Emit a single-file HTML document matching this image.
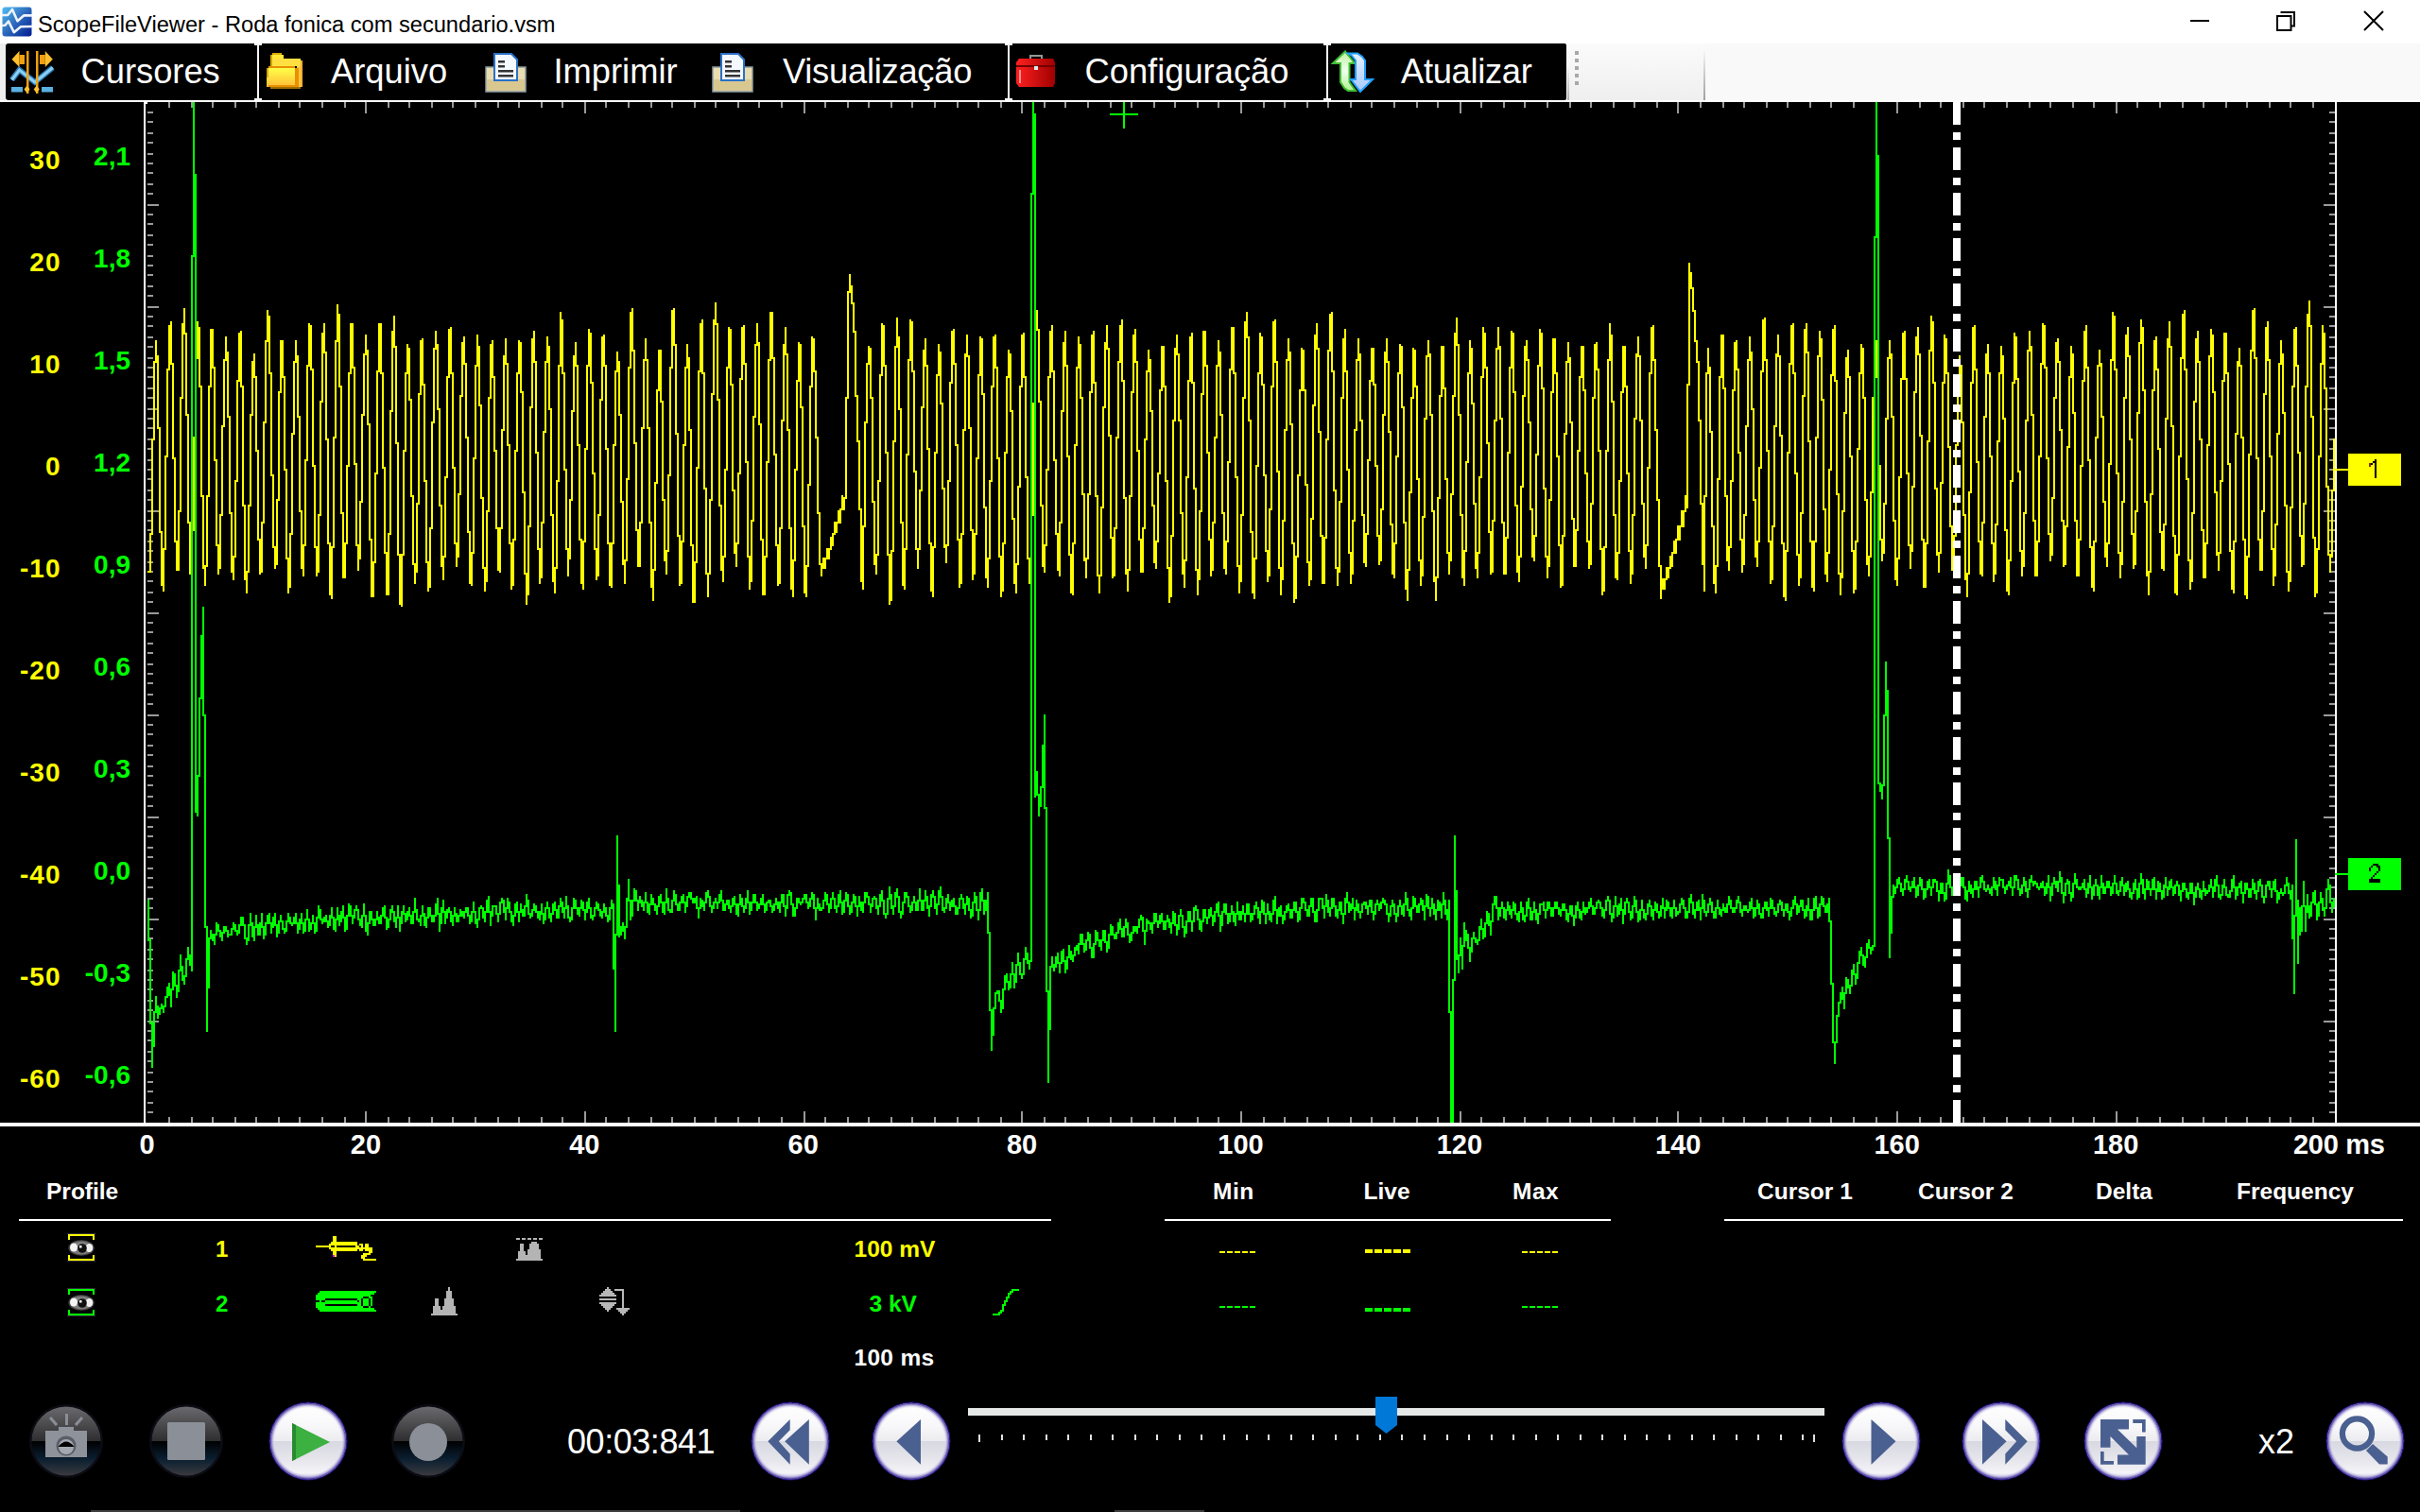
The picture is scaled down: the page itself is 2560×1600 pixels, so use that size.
<!DOCTYPE html>
<html><head><meta charset="utf-8"><title>ScopeFileViewer</title>
<style>
html,body{margin:0;padding:0;}
body{width:2560px;height:1600px;overflow:hidden;position:relative;background:#000;font-family:"Liberation Sans", sans-serif;}
.t{position:absolute;white-space:pre;line-height:1;}
.r{position:absolute;}
svg{position:absolute;overflow:visible;}
</style></head><body>

<div class="r" style="left:0px;top:0px;width:2560px;height:46px;background:#ffffff;"></div>
<svg style="left:2px;top:7px" width="32" height="32" viewBox="0 0 32 32">
<defs><linearGradient id="ig" x1="0" y1="0" x2="1" y2="1"><stop offset="0" stop-color="#50c0f4"/><stop offset="0.45" stop-color="#3070c0"/><stop offset="1" stop-color="#001890"/></linearGradient></defs>
<rect x="0.5" y="0.5" width="31" height="31" rx="3" fill="url(#ig)"/>
<polyline points="0,9 6.2,9 11,3 16.5,15.3 23.4,9.2 32,9.4" fill="none" stroke="#eef2fa" stroke-width="2.6" stroke-linejoin="round"/>
<polyline points="0,20 3.3,19.8 7,15.5 12.8,27.2 20,21.3 32,21" fill="none" stroke="#eef2fa" stroke-width="2.6" stroke-linejoin="round"/>
</svg>
<div class="t" style="left:40px;top:14.98px;font-size:23.65px;color:#000;font-weight:normal;">ScopeFileViewer - Roda fonica com secundario.vsm</div>
<div class="r" style="left:2317px;top:21px;width:20px;height:2px;background:#000;"></div>
<svg style="left:2400px;top:8px" width="36" height="30" viewBox="0 0 36 30">
<path d="M12.5 5 H27 V19.5 H24" fill="none" stroke="#000" stroke-width="2"/>
<rect x="9" y="9" width="14.5" height="15" fill="none" stroke="#000" stroke-width="2"/>
</svg>
<svg style="left:2496px;top:8px" width="30" height="30" viewBox="0 0 30 30">
<path d="M5 4 L25 24 M25 4 L5 24" fill="none" stroke="#000" stroke-width="2"/>
</svg>
<div class="r" style="left:0px;top:46px;width:2560px;height:60px;background:#f9f9f9;"></div>
<div class="r" style="left:0px;top:46px;width:6px;height:60px;background:#eeeeee;"></div>
<div class="r" style="left:1658px;top:46px;width:146px;height:60px;background:linear-gradient(#fbfbfb,#efefef)"></div>
<div class="r" style="left:1802px;top:52px;width:2px;height:54px;background:linear-gradient(rgba(160,160,160,0),#a0a0a0)"></div>
<div class="r" style="left:1658px;top:70px;width:2px;height:36px;background:linear-gradient(rgba(160,160,160,0),#b0b0b0)"></div>
<div class="r" style="left:1666px;top:54px;width:4px;height:4px;background:#a8a8a8;"></div>
<div class="r" style="left:1666px;top:62px;width:4px;height:4px;background:#a8a8a8;"></div>
<div class="r" style="left:1666px;top:70px;width:4px;height:4px;background:#a8a8a8;"></div>
<div class="r" style="left:1666px;top:78px;width:4px;height:4px;background:#a8a8a8;"></div>
<div class="r" style="left:1666px;top:86px;width:4px;height:4px;background:#a8a8a8;"></div>
<div class="r" style="left:6px;top:46px;width:1651px;height:60px;background:#000;border-radius:3px 2px 2px 3px"></div>
<div class="r" style="left:272px;top:46px;width:2px;height:60px;background:#f4f4f4;"></div>
<div class="r" style="left:269px;top:46px;width:8px;height:2px;background:#f4f4f4;"></div>
<div class="r" style="left:269px;top:104px;width:8px;height:2px;background:#f4f4f4;"></div>
<div class="r" style="left:1066px;top:46px;width:2px;height:60px;background:#f4f4f4;"></div>
<div class="r" style="left:1063px;top:46px;width:8px;height:2px;background:#f4f4f4;"></div>
<div class="r" style="left:1063px;top:104px;width:8px;height:2px;background:#f4f4f4;"></div>
<div class="r" style="left:1403px;top:46px;width:2px;height:60px;background:#f4f4f4;"></div>
<div class="r" style="left:1400px;top:46px;width:8px;height:2px;background:#f4f4f4;"></div>
<div class="r" style="left:1400px;top:104px;width:8px;height:2px;background:#f4f4f4;"></div>
<div class="t" style="left:85.5px;top:57.87px;font-size:36.3px;color:#fff;font-weight:normal;">Cursores</div>
<div class="t" style="left:350px;top:57.87px;font-size:36.3px;color:#fff;font-weight:normal;">Arquivo</div>
<div class="t" style="left:585.5px;top:57.87px;font-size:36.3px;color:#fff;font-weight:normal;">Imprimir</div>
<div class="t" style="left:828px;top:57.87px;font-size:36.3px;color:#fff;font-weight:normal;letter-spacing:-0.25px">Visualização</div>
<div class="t" style="left:1147.5px;top:57.87px;font-size:36.3px;color:#fff;font-weight:normal;">Configuração</div>
<div class="t" style="left:1482px;top:57.87px;font-size:36.3px;color:#fff;font-weight:normal;letter-spacing:-0.3px">Atualizar</div>
<svg style="left:12px;top:52px" width="46" height="50" viewBox="0 0 46 50">
<path d="M0.5 32.5 L8.5 22 L25 35 L43.8 19.5" fill="none" stroke="#2a7ab8" stroke-width="6"/>
<path d="M0.5 32.5 L8.5 22 L25 35 L43.8 19.5" fill="none" stroke="#8ccff0" stroke-width="3"/>
<rect x="0" y="40" width="12" height="5.5" fill="#5ab0e0"/><rect x="32" y="40" width="12" height="5.5" fill="#5ab0e0"/>
<rect x="16" y="2" width="2.5" height="45" fill="#f0a010"/><rect x="26" y="2" width="2.5" height="45" fill="#f0a010"/>
<path d="M0.5 10.8 L8.5 2 V19 Z" fill="#ffc030"/><rect x="8.5" y="6" width="5.5" height="10" fill="#f0a010"/>
<path d="M43.8 10.8 L35.8 2 V19 Z" fill="#ffc030"/><rect x="30" y="6" width="5.8" height="10" fill="#f0a010"/>
<path d="M16.5 38.5 L19.5 42.5 L16.5 46.5 L13.5 42.5 Z" fill="#ffc030"/><path d="M26.7 38.5 L29.7 42.5 L26.7 46.5 L23.7 42.5 Z" fill="#ffc030"/>
</svg>
<svg style="left:282px;top:56px" width="40" height="40" viewBox="0 0 40 40" shape-rendering="crispEdges">
<defs><linearGradient id="fg" x1="0" y1="0" x2="0" y2="1"><stop offset="0" stop-color="#ffff48"/><stop offset="1" stop-color="#ffbc38"/></linearGradient></defs>
<rect x="6" y="0" width="10" height="2" fill="#d8b000"/><rect x="4" y="2" width="14" height="6" fill="#ffe838"/>
<rect x="4" y="6" width="32" height="8" fill="#ffe040"/><rect x="4" y="2" width="2" height="12" fill="#d0a800"/>
<rect x="36" y="8" width="2" height="28" fill="#ffb030"/><rect x="32" y="14" width="4" height="22" fill="#ffc840"/>
<rect x="2" y="14" width="28" height="2" fill="#e89000"/>
<rect x="0" y="16" width="32" height="20" fill="url(#fg)"/><rect x="0" y="16" width="2" height="10" fill="#d8a800"/>
<rect x="30" y="16" width="4" height="20" fill="#e89000"/>
<rect x="2" y="34" width="32" height="2" fill="#e89000"/><rect x="4" y="36" width="32" height="2" fill="#a07000"/>
</svg>
<svg style="left:513px;top:56px" width="44" height="42" viewBox="0 0 44 42">
<path d="M1 15 H43 V41 H1 Z" fill="#e8dcb0" stroke="#8a9aa0" stroke-width="1.5"/>
<path d="M2 28 H42 V40 H2 Z" fill="#d8c890"/>
<path d="M10 1 H28 L34 7 V29 H10 Z" fill="#f4f8ff" stroke="#2a70c8" stroke-width="2"/>
<rect x="14" y="8" width="7" height="2.5" fill="#333"/><rect x="14" y="13" width="7" height="2.5" fill="#333"/>
<rect x="14" y="18" width="16" height="2.5" fill="#333"/><rect x="14" y="23" width="16" height="2.5" fill="#333"/>
</svg>
<svg style="left:753px;top:56px" width="44" height="42" viewBox="0 0 44 42">
<path d="M1 15 H43 V41 H1 Z" fill="#e8dcb0" stroke="#8a9aa0" stroke-width="1.5"/>
<path d="M2 28 H42 V40 H2 Z" fill="#d8c890"/>
<path d="M10 1 H28 L34 7 V29 H10 Z" fill="#f4f8ff" stroke="#2a70c8" stroke-width="2"/>
<rect x="14" y="8" width="7" height="2.5" fill="#333"/><rect x="14" y="13" width="7" height="2.5" fill="#333"/>
<rect x="14" y="18" width="16" height="2.5" fill="#333"/><rect x="14" y="23" width="16" height="2.5" fill="#333"/>
</svg>
<svg style="left:1074px;top:58px" width="44" height="36" viewBox="0 0 44 36">
<path d="M16 5 V1 H28 V5" fill="none" stroke="#909898" stroke-width="2"/>
<defs><linearGradient id="tg" x1="0" y1="0" x2="1" y2="0"><stop offset="0" stop-color="#ff2020"/><stop offset="1" stop-color="#a00000"/></linearGradient></defs>
<path d="M4 4 H40 L42 8 V30 L40 34 H4 L1 30 V8 Z" fill="url(#tg)"/>
<rect x="1" y="11" width="41" height="2" fill="#700000"/>
<rect x="4" y="16" width="2" height="14" fill="#ff9090"/>
<rect x="20" y="12" width="4" height="4" fill="#e0e8e8"/>
</svg>
<svg style="left:1410px;top:53px" width="46" height="46" viewBox="0 0 46 46">
<defs><linearGradient id="rg1" x1="0" y1="0" x2="0" y2="1"><stop offset="0" stop-color="#c0f0a0"/><stop offset="0.5" stop-color="#f0fff0"/><stop offset="1" stop-color="#b0f090"/></linearGradient>
<linearGradient id="rg2" x1="0" y1="0" x2="0" y2="1"><stop offset="0" stop-color="#e8f0ff"/><stop offset="1" stop-color="#a8c8ff"/></linearGradient></defs>
<path d="M13 1.5 L0 14 H8 V34 L12 40 L16 43 H24 L17.5 34 V14 H23 Z" fill="url(#rg1)" stroke="#40c030" stroke-width="2"/>
<path d="M16 3.5 H26 L31 7 L34 11 V31 H42 L29 44 L19 31 H24 V11 L20 6 Z" fill="url(#rg2)" stroke="#20a0ff" stroke-width="2"/>
</svg>
<div class="r" style="left:0px;top:106px;width:2560px;height:2px;background:#ffffff;"></div>
<div class="r" style="left:152px;top:106px;width:2px;height:1082px;background:#ffffff;"></div>
<div class="r" style="left:154px;top:108px;width:2px;height:2px;background:#ffffff;"></div>
<div class="r" style="left:0px;top:1188px;width:2560px;height:4px;background:#ffffff;"></div>
<div class="r" style="left:2470px;top:108px;width:2px;height:1080px;background:#ffffff;"></div>
<div class="r" style="left:178px;top:108px;width:2px;height:6px;background:#9a9a9a;"></div>
<div class="r" style="left:178px;top:1182px;width:2px;height:6px;background:#9a9a9a;"></div>
<div class="r" style="left:202px;top:108px;width:2px;height:6px;background:#9a9a9a;"></div>
<div class="r" style="left:202px;top:1182px;width:2px;height:6px;background:#9a9a9a;"></div>
<div class="r" style="left:224px;top:108px;width:2px;height:6px;background:#9a9a9a;"></div>
<div class="r" style="left:224px;top:1182px;width:2px;height:6px;background:#9a9a9a;"></div>
<div class="r" style="left:248px;top:108px;width:2px;height:6px;background:#9a9a9a;"></div>
<div class="r" style="left:248px;top:1182px;width:2px;height:6px;background:#9a9a9a;"></div>
<div class="r" style="left:270px;top:108px;width:2px;height:6px;background:#9a9a9a;"></div>
<div class="r" style="left:270px;top:1182px;width:2px;height:6px;background:#9a9a9a;"></div>
<div class="r" style="left:294px;top:108px;width:2px;height:6px;background:#9a9a9a;"></div>
<div class="r" style="left:294px;top:1182px;width:2px;height:6px;background:#9a9a9a;"></div>
<div class="r" style="left:316px;top:108px;width:2px;height:6px;background:#9a9a9a;"></div>
<div class="r" style="left:316px;top:1182px;width:2px;height:6px;background:#9a9a9a;"></div>
<div class="r" style="left:340px;top:108px;width:2px;height:6px;background:#9a9a9a;"></div>
<div class="r" style="left:340px;top:1182px;width:2px;height:6px;background:#9a9a9a;"></div>
<div class="r" style="left:364px;top:108px;width:2px;height:6px;background:#9a9a9a;"></div>
<div class="r" style="left:364px;top:1182px;width:2px;height:6px;background:#9a9a9a;"></div>
<div class="r" style="left:386px;top:108px;width:2px;height:12px;background:#9a9a9a;"></div>
<div class="r" style="left:386px;top:1176px;width:2px;height:12px;background:#9a9a9a;"></div>
<div class="r" style="left:410px;top:108px;width:2px;height:6px;background:#9a9a9a;"></div>
<div class="r" style="left:410px;top:1182px;width:2px;height:6px;background:#9a9a9a;"></div>
<div class="r" style="left:432px;top:108px;width:2px;height:6px;background:#9a9a9a;"></div>
<div class="r" style="left:432px;top:1182px;width:2px;height:6px;background:#9a9a9a;"></div>
<div class="r" style="left:456px;top:108px;width:2px;height:6px;background:#9a9a9a;"></div>
<div class="r" style="left:456px;top:1182px;width:2px;height:6px;background:#9a9a9a;"></div>
<div class="r" style="left:478px;top:108px;width:2px;height:6px;background:#9a9a9a;"></div>
<div class="r" style="left:478px;top:1182px;width:2px;height:6px;background:#9a9a9a;"></div>
<div class="r" style="left:502px;top:108px;width:2px;height:6px;background:#9a9a9a;"></div>
<div class="r" style="left:502px;top:1182px;width:2px;height:6px;background:#9a9a9a;"></div>
<div class="r" style="left:526px;top:108px;width:2px;height:6px;background:#9a9a9a;"></div>
<div class="r" style="left:526px;top:1182px;width:2px;height:6px;background:#9a9a9a;"></div>
<div class="r" style="left:548px;top:108px;width:2px;height:6px;background:#9a9a9a;"></div>
<div class="r" style="left:548px;top:1182px;width:2px;height:6px;background:#9a9a9a;"></div>
<div class="r" style="left:572px;top:108px;width:2px;height:6px;background:#9a9a9a;"></div>
<div class="r" style="left:572px;top:1182px;width:2px;height:6px;background:#9a9a9a;"></div>
<div class="r" style="left:594px;top:108px;width:2px;height:6px;background:#9a9a9a;"></div>
<div class="r" style="left:594px;top:1182px;width:2px;height:6px;background:#9a9a9a;"></div>
<div class="r" style="left:618px;top:108px;width:2px;height:12px;background:#9a9a9a;"></div>
<div class="r" style="left:618px;top:1176px;width:2px;height:12px;background:#9a9a9a;"></div>
<div class="r" style="left:640px;top:108px;width:2px;height:6px;background:#9a9a9a;"></div>
<div class="r" style="left:640px;top:1182px;width:2px;height:6px;background:#9a9a9a;"></div>
<div class="r" style="left:664px;top:108px;width:2px;height:6px;background:#9a9a9a;"></div>
<div class="r" style="left:664px;top:1182px;width:2px;height:6px;background:#9a9a9a;"></div>
<div class="r" style="left:688px;top:108px;width:2px;height:6px;background:#9a9a9a;"></div>
<div class="r" style="left:688px;top:1182px;width:2px;height:6px;background:#9a9a9a;"></div>
<div class="r" style="left:710px;top:108px;width:2px;height:6px;background:#9a9a9a;"></div>
<div class="r" style="left:710px;top:1182px;width:2px;height:6px;background:#9a9a9a;"></div>
<div class="r" style="left:734px;top:108px;width:2px;height:6px;background:#9a9a9a;"></div>
<div class="r" style="left:734px;top:1182px;width:2px;height:6px;background:#9a9a9a;"></div>
<div class="r" style="left:756px;top:108px;width:2px;height:6px;background:#9a9a9a;"></div>
<div class="r" style="left:756px;top:1182px;width:2px;height:6px;background:#9a9a9a;"></div>
<div class="r" style="left:780px;top:108px;width:2px;height:6px;background:#9a9a9a;"></div>
<div class="r" style="left:780px;top:1182px;width:2px;height:6px;background:#9a9a9a;"></div>
<div class="r" style="left:802px;top:108px;width:2px;height:6px;background:#9a9a9a;"></div>
<div class="r" style="left:802px;top:1182px;width:2px;height:6px;background:#9a9a9a;"></div>
<div class="r" style="left:826px;top:108px;width:2px;height:6px;background:#9a9a9a;"></div>
<div class="r" style="left:826px;top:1182px;width:2px;height:6px;background:#9a9a9a;"></div>
<div class="r" style="left:850px;top:108px;width:2px;height:12px;background:#9a9a9a;"></div>
<div class="r" style="left:850px;top:1176px;width:2px;height:12px;background:#9a9a9a;"></div>
<div class="r" style="left:872px;top:108px;width:2px;height:6px;background:#9a9a9a;"></div>
<div class="r" style="left:872px;top:1182px;width:2px;height:6px;background:#9a9a9a;"></div>
<div class="r" style="left:896px;top:108px;width:2px;height:6px;background:#9a9a9a;"></div>
<div class="r" style="left:896px;top:1182px;width:2px;height:6px;background:#9a9a9a;"></div>
<div class="r" style="left:918px;top:108px;width:2px;height:6px;background:#9a9a9a;"></div>
<div class="r" style="left:918px;top:1182px;width:2px;height:6px;background:#9a9a9a;"></div>
<div class="r" style="left:942px;top:108px;width:2px;height:6px;background:#9a9a9a;"></div>
<div class="r" style="left:942px;top:1182px;width:2px;height:6px;background:#9a9a9a;"></div>
<div class="r" style="left:964px;top:108px;width:2px;height:6px;background:#9a9a9a;"></div>
<div class="r" style="left:964px;top:1182px;width:2px;height:6px;background:#9a9a9a;"></div>
<div class="r" style="left:988px;top:108px;width:2px;height:6px;background:#9a9a9a;"></div>
<div class="r" style="left:988px;top:1182px;width:2px;height:6px;background:#9a9a9a;"></div>
<div class="r" style="left:1012px;top:108px;width:2px;height:6px;background:#9a9a9a;"></div>
<div class="r" style="left:1012px;top:1182px;width:2px;height:6px;background:#9a9a9a;"></div>
<div class="r" style="left:1034px;top:108px;width:2px;height:6px;background:#9a9a9a;"></div>
<div class="r" style="left:1034px;top:1182px;width:2px;height:6px;background:#9a9a9a;"></div>
<div class="r" style="left:1058px;top:108px;width:2px;height:6px;background:#9a9a9a;"></div>
<div class="r" style="left:1058px;top:1182px;width:2px;height:6px;background:#9a9a9a;"></div>
<div class="r" style="left:1080px;top:108px;width:2px;height:12px;background:#9a9a9a;"></div>
<div class="r" style="left:1080px;top:1176px;width:2px;height:12px;background:#9a9a9a;"></div>
<div class="r" style="left:1104px;top:108px;width:2px;height:6px;background:#9a9a9a;"></div>
<div class="r" style="left:1104px;top:1182px;width:2px;height:6px;background:#9a9a9a;"></div>
<div class="r" style="left:1126px;top:108px;width:2px;height:6px;background:#9a9a9a;"></div>
<div class="r" style="left:1126px;top:1182px;width:2px;height:6px;background:#9a9a9a;"></div>
<div class="r" style="left:1150px;top:108px;width:2px;height:6px;background:#9a9a9a;"></div>
<div class="r" style="left:1150px;top:1182px;width:2px;height:6px;background:#9a9a9a;"></div>
<div class="r" style="left:1174px;top:108px;width:2px;height:6px;background:#9a9a9a;"></div>
<div class="r" style="left:1174px;top:1182px;width:2px;height:6px;background:#9a9a9a;"></div>
<div class="r" style="left:1196px;top:108px;width:2px;height:6px;background:#9a9a9a;"></div>
<div class="r" style="left:1196px;top:1182px;width:2px;height:6px;background:#9a9a9a;"></div>
<div class="r" style="left:1220px;top:108px;width:2px;height:6px;background:#9a9a9a;"></div>
<div class="r" style="left:1220px;top:1182px;width:2px;height:6px;background:#9a9a9a;"></div>
<div class="r" style="left:1242px;top:108px;width:2px;height:6px;background:#9a9a9a;"></div>
<div class="r" style="left:1242px;top:1182px;width:2px;height:6px;background:#9a9a9a;"></div>
<div class="r" style="left:1266px;top:108px;width:2px;height:6px;background:#9a9a9a;"></div>
<div class="r" style="left:1266px;top:1182px;width:2px;height:6px;background:#9a9a9a;"></div>
<div class="r" style="left:1288px;top:108px;width:2px;height:6px;background:#9a9a9a;"></div>
<div class="r" style="left:1288px;top:1182px;width:2px;height:6px;background:#9a9a9a;"></div>
<div class="r" style="left:1312px;top:108px;width:2px;height:12px;background:#9a9a9a;"></div>
<div class="r" style="left:1312px;top:1176px;width:2px;height:12px;background:#9a9a9a;"></div>
<div class="r" style="left:1336px;top:108px;width:2px;height:6px;background:#9a9a9a;"></div>
<div class="r" style="left:1336px;top:1182px;width:2px;height:6px;background:#9a9a9a;"></div>
<div class="r" style="left:1358px;top:108px;width:2px;height:6px;background:#9a9a9a;"></div>
<div class="r" style="left:1358px;top:1182px;width:2px;height:6px;background:#9a9a9a;"></div>
<div class="r" style="left:1382px;top:108px;width:2px;height:6px;background:#9a9a9a;"></div>
<div class="r" style="left:1382px;top:1182px;width:2px;height:6px;background:#9a9a9a;"></div>
<div class="r" style="left:1404px;top:108px;width:2px;height:6px;background:#9a9a9a;"></div>
<div class="r" style="left:1404px;top:1182px;width:2px;height:6px;background:#9a9a9a;"></div>
<div class="r" style="left:1428px;top:108px;width:2px;height:6px;background:#9a9a9a;"></div>
<div class="r" style="left:1428px;top:1182px;width:2px;height:6px;background:#9a9a9a;"></div>
<div class="r" style="left:1450px;top:108px;width:2px;height:6px;background:#9a9a9a;"></div>
<div class="r" style="left:1450px;top:1182px;width:2px;height:6px;background:#9a9a9a;"></div>
<div class="r" style="left:1474px;top:108px;width:2px;height:6px;background:#9a9a9a;"></div>
<div class="r" style="left:1474px;top:1182px;width:2px;height:6px;background:#9a9a9a;"></div>
<div class="r" style="left:1498px;top:108px;width:2px;height:6px;background:#9a9a9a;"></div>
<div class="r" style="left:1498px;top:1182px;width:2px;height:6px;background:#9a9a9a;"></div>
<div class="r" style="left:1520px;top:108px;width:2px;height:6px;background:#9a9a9a;"></div>
<div class="r" style="left:1520px;top:1182px;width:2px;height:6px;background:#9a9a9a;"></div>
<div class="r" style="left:1544px;top:108px;width:2px;height:12px;background:#9a9a9a;"></div>
<div class="r" style="left:1544px;top:1176px;width:2px;height:12px;background:#9a9a9a;"></div>
<div class="r" style="left:1566px;top:108px;width:2px;height:6px;background:#9a9a9a;"></div>
<div class="r" style="left:1566px;top:1182px;width:2px;height:6px;background:#9a9a9a;"></div>
<div class="r" style="left:1590px;top:108px;width:2px;height:6px;background:#9a9a9a;"></div>
<div class="r" style="left:1590px;top:1182px;width:2px;height:6px;background:#9a9a9a;"></div>
<div class="r" style="left:1612px;top:108px;width:2px;height:6px;background:#9a9a9a;"></div>
<div class="r" style="left:1612px;top:1182px;width:2px;height:6px;background:#9a9a9a;"></div>
<div class="r" style="left:1636px;top:108px;width:2px;height:6px;background:#9a9a9a;"></div>
<div class="r" style="left:1636px;top:1182px;width:2px;height:6px;background:#9a9a9a;"></div>
<div class="r" style="left:1660px;top:108px;width:2px;height:6px;background:#9a9a9a;"></div>
<div class="r" style="left:1660px;top:1182px;width:2px;height:6px;background:#9a9a9a;"></div>
<div class="r" style="left:1682px;top:108px;width:2px;height:6px;background:#9a9a9a;"></div>
<div class="r" style="left:1682px;top:1182px;width:2px;height:6px;background:#9a9a9a;"></div>
<div class="r" style="left:1706px;top:108px;width:2px;height:6px;background:#9a9a9a;"></div>
<div class="r" style="left:1706px;top:1182px;width:2px;height:6px;background:#9a9a9a;"></div>
<div class="r" style="left:1728px;top:108px;width:2px;height:6px;background:#9a9a9a;"></div>
<div class="r" style="left:1728px;top:1182px;width:2px;height:6px;background:#9a9a9a;"></div>
<div class="r" style="left:1752px;top:108px;width:2px;height:6px;background:#9a9a9a;"></div>
<div class="r" style="left:1752px;top:1182px;width:2px;height:6px;background:#9a9a9a;"></div>
<div class="r" style="left:1774px;top:108px;width:2px;height:12px;background:#9a9a9a;"></div>
<div class="r" style="left:1774px;top:1176px;width:2px;height:12px;background:#9a9a9a;"></div>
<div class="r" style="left:1798px;top:108px;width:2px;height:6px;background:#9a9a9a;"></div>
<div class="r" style="left:1798px;top:1182px;width:2px;height:6px;background:#9a9a9a;"></div>
<div class="r" style="left:1822px;top:108px;width:2px;height:6px;background:#9a9a9a;"></div>
<div class="r" style="left:1822px;top:1182px;width:2px;height:6px;background:#9a9a9a;"></div>
<div class="r" style="left:1844px;top:108px;width:2px;height:6px;background:#9a9a9a;"></div>
<div class="r" style="left:1844px;top:1182px;width:2px;height:6px;background:#9a9a9a;"></div>
<div class="r" style="left:1868px;top:108px;width:2px;height:6px;background:#9a9a9a;"></div>
<div class="r" style="left:1868px;top:1182px;width:2px;height:6px;background:#9a9a9a;"></div>
<div class="r" style="left:1890px;top:108px;width:2px;height:6px;background:#9a9a9a;"></div>
<div class="r" style="left:1890px;top:1182px;width:2px;height:6px;background:#9a9a9a;"></div>
<div class="r" style="left:1914px;top:108px;width:2px;height:6px;background:#9a9a9a;"></div>
<div class="r" style="left:1914px;top:1182px;width:2px;height:6px;background:#9a9a9a;"></div>
<div class="r" style="left:1936px;top:108px;width:2px;height:6px;background:#9a9a9a;"></div>
<div class="r" style="left:1936px;top:1182px;width:2px;height:6px;background:#9a9a9a;"></div>
<div class="r" style="left:1960px;top:108px;width:2px;height:6px;background:#9a9a9a;"></div>
<div class="r" style="left:1960px;top:1182px;width:2px;height:6px;background:#9a9a9a;"></div>
<div class="r" style="left:1984px;top:108px;width:2px;height:6px;background:#9a9a9a;"></div>
<div class="r" style="left:1984px;top:1182px;width:2px;height:6px;background:#9a9a9a;"></div>
<div class="r" style="left:2006px;top:108px;width:2px;height:12px;background:#9a9a9a;"></div>
<div class="r" style="left:2006px;top:1176px;width:2px;height:12px;background:#9a9a9a;"></div>
<div class="r" style="left:2030px;top:108px;width:2px;height:6px;background:#9a9a9a;"></div>
<div class="r" style="left:2030px;top:1182px;width:2px;height:6px;background:#9a9a9a;"></div>
<div class="r" style="left:2052px;top:108px;width:2px;height:6px;background:#9a9a9a;"></div>
<div class="r" style="left:2052px;top:1182px;width:2px;height:6px;background:#9a9a9a;"></div>
<div class="r" style="left:2076px;top:108px;width:2px;height:6px;background:#9a9a9a;"></div>
<div class="r" style="left:2076px;top:1182px;width:2px;height:6px;background:#9a9a9a;"></div>
<div class="r" style="left:2098px;top:108px;width:2px;height:6px;background:#9a9a9a;"></div>
<div class="r" style="left:2098px;top:1182px;width:2px;height:6px;background:#9a9a9a;"></div>
<div class="r" style="left:2122px;top:108px;width:2px;height:6px;background:#9a9a9a;"></div>
<div class="r" style="left:2122px;top:1182px;width:2px;height:6px;background:#9a9a9a;"></div>
<div class="r" style="left:2146px;top:108px;width:2px;height:6px;background:#9a9a9a;"></div>
<div class="r" style="left:2146px;top:1182px;width:2px;height:6px;background:#9a9a9a;"></div>
<div class="r" style="left:2168px;top:108px;width:2px;height:6px;background:#9a9a9a;"></div>
<div class="r" style="left:2168px;top:1182px;width:2px;height:6px;background:#9a9a9a;"></div>
<div class="r" style="left:2192px;top:108px;width:2px;height:6px;background:#9a9a9a;"></div>
<div class="r" style="left:2192px;top:1182px;width:2px;height:6px;background:#9a9a9a;"></div>
<div class="r" style="left:2214px;top:108px;width:2px;height:6px;background:#9a9a9a;"></div>
<div class="r" style="left:2214px;top:1182px;width:2px;height:6px;background:#9a9a9a;"></div>
<div class="r" style="left:2238px;top:108px;width:2px;height:12px;background:#9a9a9a;"></div>
<div class="r" style="left:2238px;top:1176px;width:2px;height:12px;background:#9a9a9a;"></div>
<div class="r" style="left:2260px;top:108px;width:2px;height:6px;background:#9a9a9a;"></div>
<div class="r" style="left:2260px;top:1182px;width:2px;height:6px;background:#9a9a9a;"></div>
<div class="r" style="left:2284px;top:108px;width:2px;height:6px;background:#9a9a9a;"></div>
<div class="r" style="left:2284px;top:1182px;width:2px;height:6px;background:#9a9a9a;"></div>
<div class="r" style="left:2308px;top:108px;width:2px;height:6px;background:#9a9a9a;"></div>
<div class="r" style="left:2308px;top:1182px;width:2px;height:6px;background:#9a9a9a;"></div>
<div class="r" style="left:2330px;top:108px;width:2px;height:6px;background:#9a9a9a;"></div>
<div class="r" style="left:2330px;top:1182px;width:2px;height:6px;background:#9a9a9a;"></div>
<div class="r" style="left:2354px;top:108px;width:2px;height:6px;background:#9a9a9a;"></div>
<div class="r" style="left:2354px;top:1182px;width:2px;height:6px;background:#9a9a9a;"></div>
<div class="r" style="left:2376px;top:108px;width:2px;height:6px;background:#9a9a9a;"></div>
<div class="r" style="left:2376px;top:1182px;width:2px;height:6px;background:#9a9a9a;"></div>
<div class="r" style="left:2400px;top:108px;width:2px;height:6px;background:#9a9a9a;"></div>
<div class="r" style="left:2400px;top:1182px;width:2px;height:6px;background:#9a9a9a;"></div>
<div class="r" style="left:2422px;top:108px;width:2px;height:6px;background:#9a9a9a;"></div>
<div class="r" style="left:2422px;top:1182px;width:2px;height:6px;background:#9a9a9a;"></div>
<div class="r" style="left:2446px;top:108px;width:2px;height:6px;background:#9a9a9a;"></div>
<div class="r" style="left:2446px;top:1182px;width:2px;height:6px;background:#9a9a9a;"></div>
<div class="r" style="left:156px;top:118px;width:6px;height:2px;background:#9a9a9a;"></div>
<div class="r" style="left:2464px;top:118px;width:6px;height:2px;background:#9a9a9a;"></div>
<div class="r" style="left:156px;top:128px;width:6px;height:2px;background:#9a9a9a;"></div>
<div class="r" style="left:2464px;top:128px;width:6px;height:2px;background:#9a9a9a;"></div>
<div class="r" style="left:156px;top:140px;width:6px;height:2px;background:#9a9a9a;"></div>
<div class="r" style="left:2464px;top:140px;width:6px;height:2px;background:#9a9a9a;"></div>
<div class="r" style="left:156px;top:150px;width:6px;height:2px;background:#9a9a9a;"></div>
<div class="r" style="left:2464px;top:150px;width:6px;height:2px;background:#9a9a9a;"></div>
<div class="r" style="left:156px;top:162px;width:6px;height:2px;background:#9a9a9a;"></div>
<div class="r" style="left:2464px;top:162px;width:6px;height:2px;background:#9a9a9a;"></div>
<div class="r" style="left:156px;top:172px;width:6px;height:2px;background:#9a9a9a;"></div>
<div class="r" style="left:2464px;top:172px;width:6px;height:2px;background:#9a9a9a;"></div>
<div class="r" style="left:156px;top:182px;width:6px;height:2px;background:#9a9a9a;"></div>
<div class="r" style="left:2464px;top:182px;width:6px;height:2px;background:#9a9a9a;"></div>
<div class="r" style="left:156px;top:194px;width:6px;height:2px;background:#9a9a9a;"></div>
<div class="r" style="left:2464px;top:194px;width:6px;height:2px;background:#9a9a9a;"></div>
<div class="r" style="left:156px;top:204px;width:6px;height:2px;background:#9a9a9a;"></div>
<div class="r" style="left:2464px;top:204px;width:6px;height:2px;background:#9a9a9a;"></div>
<div class="r" style="left:156px;top:216px;width:12px;height:2px;background:#9a9a9a;"></div>
<div class="r" style="left:2458px;top:216px;width:12px;height:2px;background:#9a9a9a;"></div>
<div class="r" style="left:156px;top:226px;width:6px;height:2px;background:#9a9a9a;"></div>
<div class="r" style="left:2464px;top:226px;width:6px;height:2px;background:#9a9a9a;"></div>
<div class="r" style="left:156px;top:236px;width:6px;height:2px;background:#9a9a9a;"></div>
<div class="r" style="left:2464px;top:236px;width:6px;height:2px;background:#9a9a9a;"></div>
<div class="r" style="left:156px;top:248px;width:6px;height:2px;background:#9a9a9a;"></div>
<div class="r" style="left:2464px;top:248px;width:6px;height:2px;background:#9a9a9a;"></div>
<div class="r" style="left:156px;top:258px;width:6px;height:2px;background:#9a9a9a;"></div>
<div class="r" style="left:2464px;top:258px;width:6px;height:2px;background:#9a9a9a;"></div>
<div class="r" style="left:156px;top:270px;width:6px;height:2px;background:#9a9a9a;"></div>
<div class="r" style="left:2464px;top:270px;width:6px;height:2px;background:#9a9a9a;"></div>
<div class="r" style="left:156px;top:280px;width:6px;height:2px;background:#9a9a9a;"></div>
<div class="r" style="left:2464px;top:280px;width:6px;height:2px;background:#9a9a9a;"></div>
<div class="r" style="left:156px;top:290px;width:6px;height:2px;background:#9a9a9a;"></div>
<div class="r" style="left:2464px;top:290px;width:6px;height:2px;background:#9a9a9a;"></div>
<div class="r" style="left:156px;top:302px;width:6px;height:2px;background:#9a9a9a;"></div>
<div class="r" style="left:2464px;top:302px;width:6px;height:2px;background:#9a9a9a;"></div>
<div class="r" style="left:156px;top:312px;width:6px;height:2px;background:#9a9a9a;"></div>
<div class="r" style="left:2464px;top:312px;width:6px;height:2px;background:#9a9a9a;"></div>
<div class="r" style="left:156px;top:324px;width:12px;height:2px;background:#9a9a9a;"></div>
<div class="r" style="left:2458px;top:324px;width:12px;height:2px;background:#9a9a9a;"></div>
<div class="r" style="left:156px;top:334px;width:6px;height:2px;background:#9a9a9a;"></div>
<div class="r" style="left:2464px;top:334px;width:6px;height:2px;background:#9a9a9a;"></div>
<div class="r" style="left:156px;top:344px;width:6px;height:2px;background:#9a9a9a;"></div>
<div class="r" style="left:2464px;top:344px;width:6px;height:2px;background:#9a9a9a;"></div>
<div class="r" style="left:156px;top:356px;width:6px;height:2px;background:#9a9a9a;"></div>
<div class="r" style="left:2464px;top:356px;width:6px;height:2px;background:#9a9a9a;"></div>
<div class="r" style="left:156px;top:366px;width:6px;height:2px;background:#9a9a9a;"></div>
<div class="r" style="left:2464px;top:366px;width:6px;height:2px;background:#9a9a9a;"></div>
<div class="r" style="left:156px;top:378px;width:6px;height:2px;background:#9a9a9a;"></div>
<div class="r" style="left:2464px;top:378px;width:6px;height:2px;background:#9a9a9a;"></div>
<div class="r" style="left:156px;top:388px;width:6px;height:2px;background:#9a9a9a;"></div>
<div class="r" style="left:2464px;top:388px;width:6px;height:2px;background:#9a9a9a;"></div>
<div class="r" style="left:156px;top:398px;width:6px;height:2px;background:#9a9a9a;"></div>
<div class="r" style="left:2464px;top:398px;width:6px;height:2px;background:#9a9a9a;"></div>
<div class="r" style="left:156px;top:410px;width:6px;height:2px;background:#9a9a9a;"></div>
<div class="r" style="left:2464px;top:410px;width:6px;height:2px;background:#9a9a9a;"></div>
<div class="r" style="left:156px;top:420px;width:6px;height:2px;background:#9a9a9a;"></div>
<div class="r" style="left:2464px;top:420px;width:6px;height:2px;background:#9a9a9a;"></div>
<div class="r" style="left:156px;top:432px;width:12px;height:2px;background:#9a9a9a;"></div>
<div class="r" style="left:2458px;top:432px;width:12px;height:2px;background:#9a9a9a;"></div>
<div class="r" style="left:156px;top:442px;width:6px;height:2px;background:#9a9a9a;"></div>
<div class="r" style="left:2464px;top:442px;width:6px;height:2px;background:#9a9a9a;"></div>
<div class="r" style="left:156px;top:452px;width:6px;height:2px;background:#9a9a9a;"></div>
<div class="r" style="left:2464px;top:452px;width:6px;height:2px;background:#9a9a9a;"></div>
<div class="r" style="left:156px;top:464px;width:6px;height:2px;background:#9a9a9a;"></div>
<div class="r" style="left:2464px;top:464px;width:6px;height:2px;background:#9a9a9a;"></div>
<div class="r" style="left:156px;top:474px;width:6px;height:2px;background:#9a9a9a;"></div>
<div class="r" style="left:2464px;top:474px;width:6px;height:2px;background:#9a9a9a;"></div>
<div class="r" style="left:156px;top:486px;width:6px;height:2px;background:#9a9a9a;"></div>
<div class="r" style="left:2464px;top:486px;width:6px;height:2px;background:#9a9a9a;"></div>
<div class="r" style="left:156px;top:496px;width:6px;height:2px;background:#9a9a9a;"></div>
<div class="r" style="left:2464px;top:496px;width:6px;height:2px;background:#9a9a9a;"></div>
<div class="r" style="left:156px;top:506px;width:6px;height:2px;background:#9a9a9a;"></div>
<div class="r" style="left:2464px;top:506px;width:6px;height:2px;background:#9a9a9a;"></div>
<div class="r" style="left:156px;top:518px;width:6px;height:2px;background:#9a9a9a;"></div>
<div class="r" style="left:2464px;top:518px;width:6px;height:2px;background:#9a9a9a;"></div>
<div class="r" style="left:156px;top:528px;width:6px;height:2px;background:#9a9a9a;"></div>
<div class="r" style="left:2464px;top:528px;width:6px;height:2px;background:#9a9a9a;"></div>
<div class="r" style="left:156px;top:540px;width:12px;height:2px;background:#9a9a9a;"></div>
<div class="r" style="left:2458px;top:540px;width:12px;height:2px;background:#9a9a9a;"></div>
<div class="r" style="left:156px;top:550px;width:6px;height:2px;background:#9a9a9a;"></div>
<div class="r" style="left:2464px;top:550px;width:6px;height:2px;background:#9a9a9a;"></div>
<div class="r" style="left:156px;top:560px;width:6px;height:2px;background:#9a9a9a;"></div>
<div class="r" style="left:2464px;top:560px;width:6px;height:2px;background:#9a9a9a;"></div>
<div class="r" style="left:156px;top:572px;width:6px;height:2px;background:#9a9a9a;"></div>
<div class="r" style="left:2464px;top:572px;width:6px;height:2px;background:#9a9a9a;"></div>
<div class="r" style="left:156px;top:582px;width:6px;height:2px;background:#9a9a9a;"></div>
<div class="r" style="left:2464px;top:582px;width:6px;height:2px;background:#9a9a9a;"></div>
<div class="r" style="left:156px;top:594px;width:6px;height:2px;background:#9a9a9a;"></div>
<div class="r" style="left:2464px;top:594px;width:6px;height:2px;background:#9a9a9a;"></div>
<div class="r" style="left:156px;top:604px;width:6px;height:2px;background:#9a9a9a;"></div>
<div class="r" style="left:2464px;top:604px;width:6px;height:2px;background:#9a9a9a;"></div>
<div class="r" style="left:156px;top:614px;width:6px;height:2px;background:#9a9a9a;"></div>
<div class="r" style="left:2464px;top:614px;width:6px;height:2px;background:#9a9a9a;"></div>
<div class="r" style="left:156px;top:626px;width:6px;height:2px;background:#9a9a9a;"></div>
<div class="r" style="left:2464px;top:626px;width:6px;height:2px;background:#9a9a9a;"></div>
<div class="r" style="left:156px;top:636px;width:6px;height:2px;background:#9a9a9a;"></div>
<div class="r" style="left:2464px;top:636px;width:6px;height:2px;background:#9a9a9a;"></div>
<div class="r" style="left:156px;top:648px;width:12px;height:2px;background:#9a9a9a;"></div>
<div class="r" style="left:2458px;top:648px;width:12px;height:2px;background:#9a9a9a;"></div>
<div class="r" style="left:156px;top:658px;width:6px;height:2px;background:#9a9a9a;"></div>
<div class="r" style="left:2464px;top:658px;width:6px;height:2px;background:#9a9a9a;"></div>
<div class="r" style="left:156px;top:668px;width:6px;height:2px;background:#9a9a9a;"></div>
<div class="r" style="left:2464px;top:668px;width:6px;height:2px;background:#9a9a9a;"></div>
<div class="r" style="left:156px;top:680px;width:6px;height:2px;background:#9a9a9a;"></div>
<div class="r" style="left:2464px;top:680px;width:6px;height:2px;background:#9a9a9a;"></div>
<div class="r" style="left:156px;top:690px;width:6px;height:2px;background:#9a9a9a;"></div>
<div class="r" style="left:2464px;top:690px;width:6px;height:2px;background:#9a9a9a;"></div>
<div class="r" style="left:156px;top:702px;width:6px;height:2px;background:#9a9a9a;"></div>
<div class="r" style="left:2464px;top:702px;width:6px;height:2px;background:#9a9a9a;"></div>
<div class="r" style="left:156px;top:712px;width:6px;height:2px;background:#9a9a9a;"></div>
<div class="r" style="left:2464px;top:712px;width:6px;height:2px;background:#9a9a9a;"></div>
<div class="r" style="left:156px;top:722px;width:6px;height:2px;background:#9a9a9a;"></div>
<div class="r" style="left:2464px;top:722px;width:6px;height:2px;background:#9a9a9a;"></div>
<div class="r" style="left:156px;top:734px;width:6px;height:2px;background:#9a9a9a;"></div>
<div class="r" style="left:2464px;top:734px;width:6px;height:2px;background:#9a9a9a;"></div>
<div class="r" style="left:156px;top:744px;width:6px;height:2px;background:#9a9a9a;"></div>
<div class="r" style="left:2464px;top:744px;width:6px;height:2px;background:#9a9a9a;"></div>
<div class="r" style="left:156px;top:756px;width:12px;height:2px;background:#9a9a9a;"></div>
<div class="r" style="left:2458px;top:756px;width:12px;height:2px;background:#9a9a9a;"></div>
<div class="r" style="left:156px;top:766px;width:6px;height:2px;background:#9a9a9a;"></div>
<div class="r" style="left:2464px;top:766px;width:6px;height:2px;background:#9a9a9a;"></div>
<div class="r" style="left:156px;top:776px;width:6px;height:2px;background:#9a9a9a;"></div>
<div class="r" style="left:2464px;top:776px;width:6px;height:2px;background:#9a9a9a;"></div>
<div class="r" style="left:156px;top:788px;width:6px;height:2px;background:#9a9a9a;"></div>
<div class="r" style="left:2464px;top:788px;width:6px;height:2px;background:#9a9a9a;"></div>
<div class="r" style="left:156px;top:798px;width:6px;height:2px;background:#9a9a9a;"></div>
<div class="r" style="left:2464px;top:798px;width:6px;height:2px;background:#9a9a9a;"></div>
<div class="r" style="left:156px;top:810px;width:6px;height:2px;background:#9a9a9a;"></div>
<div class="r" style="left:2464px;top:810px;width:6px;height:2px;background:#9a9a9a;"></div>
<div class="r" style="left:156px;top:820px;width:6px;height:2px;background:#9a9a9a;"></div>
<div class="r" style="left:2464px;top:820px;width:6px;height:2px;background:#9a9a9a;"></div>
<div class="r" style="left:156px;top:830px;width:6px;height:2px;background:#9a9a9a;"></div>
<div class="r" style="left:2464px;top:830px;width:6px;height:2px;background:#9a9a9a;"></div>
<div class="r" style="left:156px;top:842px;width:6px;height:2px;background:#9a9a9a;"></div>
<div class="r" style="left:2464px;top:842px;width:6px;height:2px;background:#9a9a9a;"></div>
<div class="r" style="left:156px;top:852px;width:6px;height:2px;background:#9a9a9a;"></div>
<div class="r" style="left:2464px;top:852px;width:6px;height:2px;background:#9a9a9a;"></div>
<div class="r" style="left:156px;top:864px;width:12px;height:2px;background:#9a9a9a;"></div>
<div class="r" style="left:2458px;top:864px;width:12px;height:2px;background:#9a9a9a;"></div>
<div class="r" style="left:156px;top:874px;width:6px;height:2px;background:#9a9a9a;"></div>
<div class="r" style="left:2464px;top:874px;width:6px;height:2px;background:#9a9a9a;"></div>
<div class="r" style="left:156px;top:884px;width:6px;height:2px;background:#9a9a9a;"></div>
<div class="r" style="left:2464px;top:884px;width:6px;height:2px;background:#9a9a9a;"></div>
<div class="r" style="left:156px;top:896px;width:6px;height:2px;background:#9a9a9a;"></div>
<div class="r" style="left:2464px;top:896px;width:6px;height:2px;background:#9a9a9a;"></div>
<div class="r" style="left:156px;top:906px;width:6px;height:2px;background:#9a9a9a;"></div>
<div class="r" style="left:2464px;top:906px;width:6px;height:2px;background:#9a9a9a;"></div>
<div class="r" style="left:156px;top:918px;width:6px;height:2px;background:#9a9a9a;"></div>
<div class="r" style="left:2464px;top:918px;width:6px;height:2px;background:#9a9a9a;"></div>
<div class="r" style="left:156px;top:928px;width:6px;height:2px;background:#9a9a9a;"></div>
<div class="r" style="left:2464px;top:928px;width:6px;height:2px;background:#9a9a9a;"></div>
<div class="r" style="left:156px;top:938px;width:6px;height:2px;background:#9a9a9a;"></div>
<div class="r" style="left:2464px;top:938px;width:6px;height:2px;background:#9a9a9a;"></div>
<div class="r" style="left:156px;top:950px;width:6px;height:2px;background:#9a9a9a;"></div>
<div class="r" style="left:2464px;top:950px;width:6px;height:2px;background:#9a9a9a;"></div>
<div class="r" style="left:156px;top:960px;width:6px;height:2px;background:#9a9a9a;"></div>
<div class="r" style="left:2464px;top:960px;width:6px;height:2px;background:#9a9a9a;"></div>
<div class="r" style="left:156px;top:972px;width:12px;height:2px;background:#9a9a9a;"></div>
<div class="r" style="left:2458px;top:972px;width:12px;height:2px;background:#9a9a9a;"></div>
<div class="r" style="left:156px;top:982px;width:6px;height:2px;background:#9a9a9a;"></div>
<div class="r" style="left:2464px;top:982px;width:6px;height:2px;background:#9a9a9a;"></div>
<div class="r" style="left:156px;top:992px;width:6px;height:2px;background:#9a9a9a;"></div>
<div class="r" style="left:2464px;top:992px;width:6px;height:2px;background:#9a9a9a;"></div>
<div class="r" style="left:156px;top:1004px;width:6px;height:2px;background:#9a9a9a;"></div>
<div class="r" style="left:2464px;top:1004px;width:6px;height:2px;background:#9a9a9a;"></div>
<div class="r" style="left:156px;top:1014px;width:6px;height:2px;background:#9a9a9a;"></div>
<div class="r" style="left:2464px;top:1014px;width:6px;height:2px;background:#9a9a9a;"></div>
<div class="r" style="left:156px;top:1026px;width:6px;height:2px;background:#9a9a9a;"></div>
<div class="r" style="left:2464px;top:1026px;width:6px;height:2px;background:#9a9a9a;"></div>
<div class="r" style="left:156px;top:1036px;width:6px;height:2px;background:#9a9a9a;"></div>
<div class="r" style="left:2464px;top:1036px;width:6px;height:2px;background:#9a9a9a;"></div>
<div class="r" style="left:156px;top:1046px;width:6px;height:2px;background:#9a9a9a;"></div>
<div class="r" style="left:2464px;top:1046px;width:6px;height:2px;background:#9a9a9a;"></div>
<div class="r" style="left:156px;top:1058px;width:6px;height:2px;background:#9a9a9a;"></div>
<div class="r" style="left:2464px;top:1058px;width:6px;height:2px;background:#9a9a9a;"></div>
<div class="r" style="left:156px;top:1068px;width:6px;height:2px;background:#9a9a9a;"></div>
<div class="r" style="left:2464px;top:1068px;width:6px;height:2px;background:#9a9a9a;"></div>
<div class="r" style="left:156px;top:1080px;width:12px;height:2px;background:#9a9a9a;"></div>
<div class="r" style="left:2458px;top:1080px;width:12px;height:2px;background:#9a9a9a;"></div>
<div class="r" style="left:156px;top:1090px;width:6px;height:2px;background:#9a9a9a;"></div>
<div class="r" style="left:2464px;top:1090px;width:6px;height:2px;background:#9a9a9a;"></div>
<div class="r" style="left:156px;top:1100px;width:6px;height:2px;background:#9a9a9a;"></div>
<div class="r" style="left:2464px;top:1100px;width:6px;height:2px;background:#9a9a9a;"></div>
<div class="r" style="left:156px;top:1112px;width:6px;height:2px;background:#9a9a9a;"></div>
<div class="r" style="left:2464px;top:1112px;width:6px;height:2px;background:#9a9a9a;"></div>
<div class="r" style="left:156px;top:1122px;width:6px;height:2px;background:#9a9a9a;"></div>
<div class="r" style="left:2464px;top:1122px;width:6px;height:2px;background:#9a9a9a;"></div>
<div class="r" style="left:156px;top:1134px;width:6px;height:2px;background:#9a9a9a;"></div>
<div class="r" style="left:2464px;top:1134px;width:6px;height:2px;background:#9a9a9a;"></div>
<div class="r" style="left:156px;top:1144px;width:6px;height:2px;background:#9a9a9a;"></div>
<div class="r" style="left:2464px;top:1144px;width:6px;height:2px;background:#9a9a9a;"></div>
<div class="r" style="left:156px;top:1154px;width:6px;height:2px;background:#9a9a9a;"></div>
<div class="r" style="left:2464px;top:1154px;width:6px;height:2px;background:#9a9a9a;"></div>
<div class="r" style="left:156px;top:1166px;width:6px;height:2px;background:#9a9a9a;"></div>
<div class="r" style="left:2464px;top:1166px;width:6px;height:2px;background:#9a9a9a;"></div>
<div class="r" style="left:156px;top:1176px;width:6px;height:2px;background:#9a9a9a;"></div>
<div class="r" style="left:2464px;top:1176px;width:6px;height:2px;background:#9a9a9a;"></div>
<div class="t" style="left:-535.5px;width:600px;text-align:right;top:156.30px;font-size:28px;color:#ffff00;font-weight:bold;letter-spacing:1px">30</div>
<div class="t" style="left:-462px;width:600px;text-align:right;top:152.30px;font-size:28px;color:#00ff00;font-weight:bold;">2,1</div>
<div class="t" style="left:-535.5px;width:600px;text-align:right;top:264.30px;font-size:28px;color:#ffff00;font-weight:bold;letter-spacing:1px">20</div>
<div class="t" style="left:-462px;width:600px;text-align:right;top:260.30px;font-size:28px;color:#00ff00;font-weight:bold;">1,8</div>
<div class="t" style="left:-535.5px;width:600px;text-align:right;top:372.30px;font-size:28px;color:#ffff00;font-weight:bold;letter-spacing:1px">10</div>
<div class="t" style="left:-462px;width:600px;text-align:right;top:368.30px;font-size:28px;color:#00ff00;font-weight:bold;">1,5</div>
<div class="t" style="left:-535.5px;width:600px;text-align:right;top:480.30px;font-size:28px;color:#ffff00;font-weight:bold;letter-spacing:1px">0</div>
<div class="t" style="left:-462px;width:600px;text-align:right;top:476.30px;font-size:28px;color:#00ff00;font-weight:bold;">1,2</div>
<div class="t" style="left:-535.5px;width:600px;text-align:right;top:588.30px;font-size:28px;color:#ffff00;font-weight:bold;letter-spacing:1px">-10</div>
<div class="t" style="left:-462px;width:600px;text-align:right;top:584.30px;font-size:28px;color:#00ff00;font-weight:bold;">0,9</div>
<div class="t" style="left:-535.5px;width:600px;text-align:right;top:696.30px;font-size:28px;color:#ffff00;font-weight:bold;letter-spacing:1px">-20</div>
<div class="t" style="left:-462px;width:600px;text-align:right;top:692.30px;font-size:28px;color:#00ff00;font-weight:bold;">0,6</div>
<div class="t" style="left:-535.5px;width:600px;text-align:right;top:804.30px;font-size:28px;color:#ffff00;font-weight:bold;letter-spacing:1px">-30</div>
<div class="t" style="left:-462px;width:600px;text-align:right;top:800.30px;font-size:28px;color:#00ff00;font-weight:bold;">0,3</div>
<div class="t" style="left:-535.5px;width:600px;text-align:right;top:912.30px;font-size:28px;color:#ffff00;font-weight:bold;letter-spacing:1px">-40</div>
<div class="t" style="left:-462px;width:600px;text-align:right;top:908.30px;font-size:28px;color:#00ff00;font-weight:bold;">0,0</div>
<div class="t" style="left:-535.5px;width:600px;text-align:right;top:1020.30px;font-size:28px;color:#ffff00;font-weight:bold;letter-spacing:1px">-50</div>
<div class="t" style="left:-462px;width:600px;text-align:right;top:1016.30px;font-size:28px;color:#00ff00;font-weight:bold;">-0,3</div>
<div class="t" style="left:-535.5px;width:600px;text-align:right;top:1128.30px;font-size:28px;color:#ffff00;font-weight:bold;letter-spacing:1px">-60</div>
<div class="t" style="left:-462px;width:600px;text-align:right;top:1124.30px;font-size:28px;color:#00ff00;font-weight:bold;">-0,6</div>
<svg style="left:0;top:0" width="2560" height="1600" shape-rendering="crispEdges"><path fill="#ffff00" d="M156 604h2v2h-2zM158 564h2v42h-2zM160 464h2v102h-2zM162 382h2v84h-2zM164 360h2v24h-2zM166 376h2v78h-2zM168 452h2v112h-2zM170 562h2v58h-2zM172 580h2v46h-2zM174 482h2v100h-2zM176 390h2v94h-2zM178 344h2v48h-2zM180 340h2v46h-2zM182 384h2v102h-2zM184 484h2v90h-2zM186 572h2v32h-2zM188 540h2v64h-2zM190 420h2v122h-2zM192 342h2v80h-2zM194 326h2v28h-2zM196 352h2v88h-2zM198 438h2v116h-2zM200 552h2v56h-2zM202 560h2v52h-2zM204 462h2v100h-2zM206 378h2v86h-2zM208 340h2v40h-2zM210 346h2v64h-2zM212 408h2v118h-2zM214 524h2v78h-2zM216 598h2v22h-2zM218 524h2v76h-2zM220 408h2v118h-2zM222 348h2v62h-2zM224 348h2v42h-2zM226 388h2v100h-2zM228 486h2v92h-2zM230 576h2v32h-2zM232 544h2v58h-2zM234 450h2v96h-2zM236 380h2v72h-2zM238 356h2v26h-2zM240 372h2v70h-2zM242 440h2v104h-2zM244 542h2v64h-2zM246 588h2v26h-2zM248 508h2v82h-2zM250 402h2v108h-2zM252 352h2v52h-2zM254 350h2v60h-2zM256 408h2v128h-2zM258 534h2v80h-2zM260 604h2v24h-2zM262 534h2v72h-2zM264 438h2v98h-2zM266 382h2v58h-2zM268 374h2v26h-2zM270 398h2v80h-2zM272 476h2v96h-2zM274 570h2v38h-2zM276 552h2v54h-2zM278 446h2v108h-2zM280 360h2v88h-2zM282 328h2v34h-2zM284 334h2v62h-2zM286 394h2v110h-2zM288 502h2v78h-2zM290 578h2v24h-2zM292 528h2v70h-2zM294 414h2v116h-2zM296 360h2v56h-2zM298 360h2v40h-2zM300 398h2v100h-2zM302 496h2v96h-2zM304 590h2v38h-2zM306 564h2v58h-2zM308 458h2v108h-2zM310 382h2v78h-2zM312 360h2v24h-2zM314 376h2v66h-2zM316 440h2v102h-2zM318 540h2v62h-2zM320 576h2v34h-2zM322 486h2v92h-2zM324 386h2v102h-2zM326 342h2v46h-2zM328 344h2v48h-2zM330 390h2v104h-2zM332 492h2v88h-2zM334 578h2v32h-2zM336 544h2v62h-2zM338 424h2v122h-2zM340 352h2v74h-2zM342 342h2v32h-2zM344 372h2v94h-2zM346 464h2v112h-2zM348 574h2v56h-2zM350 578h2v56h-2zM352 462h2v118h-2zM354 360h2v104h-2zM356 322h2v40h-2zM358 332h2v78h-2zM360 408h2v136h-2zM362 542h2v70h-2zM364 574h2v38h-2zM366 492h2v84h-2zM368 394h2v100h-2zM370 342h2v54h-2zM372 342h2v48h-2zM374 388h2v104h-2zM376 490h2v88h-2zM378 576h2v28h-2zM380 530h2v62h-2zM382 438h2v94h-2zM384 374h2v66h-2zM386 354h2v22h-2zM388 370h2v80h-2zM390 448h2v124h-2zM392 570h2v62h-2zM394 594h2v38h-2zM396 500h2v96h-2zM398 392h2v110h-2zM400 342h2v52h-2zM402 342h2v54h-2zM404 394h2v102h-2zM406 494h2v92h-2zM408 584h2v46h-2zM410 564h2v66h-2zM412 434h2v132h-2zM414 350h2v86h-2zM416 334h2v34h-2zM418 366h2v104h-2zM420 468h2v120h-2zM422 586h2v54h-2zM424 586h2v56h-2zM426 476h2v112h-2zM428 394h2v84h-2zM430 364h2v32h-2zM432 368h2v56h-2zM434 422h2v104h-2zM436 524h2v74h-2zM438 596h2v22h-2zM440 532h2v74h-2zM442 416h2v118h-2zM444 360h2v58h-2zM446 358h2v50h-2zM448 406h2v104h-2zM450 508h2v88h-2zM452 594h2v32h-2zM454 558h2v64h-2zM456 446h2v114h-2zM458 368h2v80h-2zM460 350h2v20h-2zM462 364h2v70h-2zM464 432h2v104h-2zM466 534h2v66h-2zM468 588h2v26h-2zM470 504h2v86h-2zM472 398h2v108h-2zM474 348h2v52h-2zM476 346h2v50h-2zM478 394h2v102h-2zM480 494h2v82h-2zM482 574h2v26h-2zM484 522h2v68h-2zM486 418h2v106h-2zM488 362h2v58h-2zM490 356h2v30h-2zM492 384h2v80h-2zM494 462h2v102h-2zM496 562h2v56h-2zM498 584h2v36h-2zM500 484h2v102h-2zM502 386h2v100h-2zM504 354h2v34h-2zM506 366h2v64h-2zM508 428h2v100h-2zM510 526h2v76h-2zM512 600h2v26h-2zM514 540h2v76h-2zM516 420h2v122h-2zM518 364h2v58h-2zM520 360h2v40h-2zM522 398h2v80h-2zM524 476h2v84h-2zM526 558h2v46h-2zM528 558h2v48h-2zM530 454h2v106h-2zM532 376h2v80h-2zM534 358h2v28h-2zM536 384h2v88h-2zM538 470h2v106h-2zM540 574h2v50h-2zM542 570h2v50h-2zM544 476h2v96h-2zM546 394h2v84h-2zM548 360h2v36h-2zM550 362h2v54h-2zM552 414h2v108h-2zM554 520h2v88h-2zM556 606h2v34h-2zM558 556h2v74h-2zM560 430h2v128h-2zM562 358h2v74h-2zM564 350h2v34h-2zM566 382h2v98h-2zM568 478h2v104h-2zM570 580h2v38h-2zM572 552h2v60h-2zM574 456h2v98h-2zM576 382h2v76h-2zM578 356h2v28h-2zM580 366h2v68h-2zM582 432h2v114h-2zM584 544h2v72h-2zM586 600h2v28h-2zM588 508h2v94h-2zM590 386h2v124h-2zM592 330h2v58h-2zM594 338h2v58h-2zM596 394h2v104h-2zM598 496h2v86h-2zM600 580h2v30h-2zM602 528h2v64h-2zM604 434h2v96h-2zM606 376h2v60h-2zM608 362h2v26h-2zM610 386h2v86h-2zM612 470h2v102h-2zM614 570h2v48h-2zM616 572h2v52h-2zM618 474h2v100h-2zM620 386h2v90h-2zM622 348h2v40h-2zM624 352h2v54h-2zM626 404h2v98h-2zM628 500h2v82h-2zM630 580h2v34h-2zM632 544h2v66h-2zM634 422h2v124h-2zM636 356h2v68h-2zM638 354h2v34h-2zM640 386h2v90h-2zM642 474h2v102h-2zM644 574h2v46h-2zM646 574h2v48h-2zM648 470h2v106h-2zM650 392h2v80h-2zM652 372h2v22h-2zM654 382h2v58h-2zM656 438h2v94h-2zM658 530h2v68h-2zM660 592h2v26h-2zM662 506h2v88h-2zM664 388h2v120h-2zM666 330h2v60h-2zM668 326h2v46h-2zM670 370h2v100h-2zM672 468h2v94h-2zM674 560h2v40h-2zM676 552h2v48h-2zM678 452h2v102h-2zM680 380h2v74h-2zM682 358h2v24h-2zM684 380h2v74h-2zM686 452h2v102h-2zM688 552h2v70h-2zM690 602h2v34h-2zM692 510h2v94h-2zM694 412h2v100h-2zM696 370h2v44h-2zM698 370h2v56h-2zM700 424h2v106h-2zM702 528h2v66h-2zM704 582h2v26h-2zM706 502h2v82h-2zM708 388h2v116h-2zM710 328h2v62h-2zM712 326h2v40h-2zM714 364h2v96h-2zM716 458h2v110h-2zM718 566h2v54h-2zM720 572h2v46h-2zM722 470h2v104h-2zM724 388h2v84h-2zM726 364h2v26h-2zM728 378h2v78h-2zM730 454h2v124h-2zM732 576h2v62h-2zM734 594h2v44h-2zM736 494h2v102h-2zM738 392h2v104h-2zM740 342h2v52h-2zM742 338h2v58h-2zM744 394h2v124h-2zM746 516h2v92h-2zM748 606h2v26h-2zM750 528h2v80h-2zM752 416h2v114h-2zM754 338h2v80h-2zM756 320h2v24h-2zM758 342h2v82h-2zM760 422h2v114h-2zM762 534h2v70h-2zM764 588h2v28h-2zM766 496h2v94h-2zM768 388h2v110h-2zM770 346h2v44h-2zM772 348h2v60h-2zM774 406h2v114h-2zM776 518h2v68h-2zM778 574h2v26h-2zM780 500h2v76h-2zM782 400h2v102h-2zM784 346h2v56h-2zM786 344h2v42h-2zM788 384h2v106h-2zM790 488h2v102h-2zM792 588h2v36h-2zM794 550h2v66h-2zM796 440h2v112h-2zM798 364h2v78h-2zM800 342h2v24h-2zM802 362h2v88h-2zM804 448h2v124h-2zM806 570h2v60h-2zM808 588h2v42h-2zM810 488h2v102h-2zM812 380h2v110h-2zM814 330h2v52h-2zM816 330h2v50h-2zM818 378h2v104h-2zM820 480h2v98h-2zM822 576h2v44h-2zM824 558h2v60h-2zM826 444h2v116h-2zM828 364h2v82h-2zM830 346h2v30h-2zM832 374h2v82h-2zM834 454h2v106h-2zM836 558h2v66h-2zM838 592h2v40h-2zM840 496h2v98h-2zM842 402h2v96h-2zM844 362h2v42h-2zM846 364h2v68h-2zM848 430h2v128h-2zM850 556h2v72h-2zM852 598h2v34h-2zM854 512h2v88h-2zM856 408h2v106h-2zM858 356h2v54h-2zM860 358h2v36h-2zM862 392h2v72h-2zM864 462h2v82h-2zM866 542h2v56h-2zM868 596h2v14h-2zM870 590h2v12h-2zM872 590h2v12h-2zM874 580h2v12h-2zM876 580h2v12h-2zM878 568h2v14h-2zM880 564h2v14h-2zM882 552h2v14h-2zM884 552h2v12h-2zM886 540h2v14h-2zM888 538h2v16h-2zM890 524h2v16h-2zM892 526h2v14h-2zM894 420h2v108h-2zM896 308h2v114h-2zM898 290h2v20h-2zM900 302h2v20h-2zM902 320h2v32h-2zM904 350h2v70h-2zM906 418h2v50h-2zM908 466h2v74h-2zM910 538h2v78h-2zM912 556h2v68h-2zM914 446h2v112h-2zM916 384h2v64h-2zM918 366h2v20h-2zM920 368h2v54h-2zM922 420h2v112h-2zM924 530h2v68h-2zM926 586h2v22h-2zM928 508h2v80h-2zM930 396h2v114h-2zM932 342h2v56h-2zM934 344h2v44h-2zM936 386h2v94h-2zM938 478h2v110h-2zM940 586h2v54h-2zM942 582h2v54h-2zM944 466h2v118h-2zM946 366h2v102h-2zM948 336h2v32h-2zM950 356h2v78h-2zM952 432h2v122h-2zM954 552h2v68h-2zM956 580h2v44h-2zM958 480h2v102h-2zM960 380h2v102h-2zM962 338h2v44h-2zM964 340h2v54h-2zM966 392h2v108h-2zM968 498h2v84h-2zM970 580h2v22h-2zM972 518h2v64h-2zM974 430h2v90h-2zM976 370h2v62h-2zM978 358h2v30h-2zM980 386h2v90h-2zM982 474h2v102h-2zM984 574h2v52h-2zM986 578h2v54h-2zM988 478h2v102h-2zM990 396h2v84h-2zM992 364h2v34h-2zM994 372h2v56h-2zM996 426h2v92h-2zM998 516h2v64h-2zM1000 576h2v20h-2zM1002 508h2v70h-2zM1004 404h2v106h-2zM1006 350h2v56h-2zM1008 348h2v38h-2zM1010 384h2v88h-2zM1012 470h2v102h-2zM1014 570h2v52h-2zM1016 564h2v54h-2zM1018 454h2v112h-2zM1020 374h2v82h-2zM1022 354h2v24h-2zM1024 376h2v78h-2zM1026 452h2v110h-2zM1028 560h2v54h-2zM1030 564h2v44h-2zM1032 484h2v82h-2zM1034 396h2v90h-2zM1036 356h2v42h-2zM1038 358h2v60h-2zM1040 416h2v122h-2zM1042 536h2v76h-2zM1044 590h2v32h-2zM1046 508h2v84h-2zM1048 408h2v102h-2zM1050 356h2v54h-2zM1052 354h2v36h-2zM1054 388h2v98h-2zM1056 484h2v106h-2zM1058 588h2v44h-2zM1060 574h2v52h-2zM1062 478h2v98h-2zM1064 398h2v82h-2zM1066 370h2v30h-2zM1068 374h2v62h-2zM1070 434h2v116h-2zM1072 548h2v70h-2zM1074 596h2v32h-2zM1076 514h2v84h-2zM1078 408h2v108h-2zM1080 354h2v56h-2zM1082 352h2v48h-2zM1084 398h2v108h-2zM1086 504h2v88h-2zM1088 590h2v28h-2zM1090 544h2v66h-2zM1092 426h2v120h-2zM1094 346h2v82h-2zM1096 328h2v22h-2zM1098 348h2v78h-2zM1100 424h2v112h-2zM1102 534h2v66h-2zM1104 576h2v30h-2zM1106 496h2v82h-2zM1108 398h2v100h-2zM1110 350h2v50h-2zM1112 344h2v50h-2zM1114 392h2v96h-2zM1116 486h2v80h-2zM1118 564h2v40h-2zM1120 552h2v58h-2zM1122 434h2v120h-2zM1124 362h2v74h-2zM1126 350h2v38h-2zM1128 386h2v98h-2zM1130 482h2v106h-2zM1132 586h2v42h-2zM1134 574h2v56h-2zM1136 470h2v106h-2zM1138 388h2v84h-2zM1140 356h2v34h-2zM1142 364h2v58h-2zM1144 420h2v104h-2zM1146 522h2v72h-2zM1148 590h2v22h-2zM1150 522h2v70h-2zM1152 414h2v110h-2zM1154 354h2v62h-2zM1156 350h2v56h-2zM1158 404h2v122h-2zM1160 524h2v86h-2zM1162 608h2v20h-2zM1164 536h2v74h-2zM1166 430h2v108h-2zM1168 362h2v70h-2zM1170 344h2v26h-2zM1172 368h2v94h-2zM1174 460h2v110h-2zM1176 568h2v44h-2zM1178 558h2v52h-2zM1180 462h2v98h-2zM1182 382h2v82h-2zM1184 344h2v40h-2zM1186 338h2v66h-2zM1188 402h2v126h-2zM1190 526h2v82h-2zM1192 602h2v24h-2zM1194 524h2v80h-2zM1196 414h2v112h-2zM1198 354h2v62h-2zM1200 348h2v36h-2zM1202 382h2v96h-2zM1204 476h2v96h-2zM1206 570h2v36h-2zM1208 558h2v48h-2zM1210 464h2v96h-2zM1212 392h2v74h-2zM1214 370h2v24h-2zM1216 380h2v56h-2zM1218 434h2v102h-2zM1220 534h2v62h-2zM1222 572h2v30h-2zM1224 500h2v74h-2zM1226 412h2v90h-2zM1228 366h2v48h-2zM1230 366h2v44h-2zM1232 408h2v102h-2zM1234 508h2v94h-2zM1236 600h2v38h-2zM1238 566h2v66h-2zM1240 444h2v124h-2zM1242 368h2v78h-2zM1244 354h2v22h-2zM1246 374h2v72h-2zM1248 444h2v100h-2zM1250 542h2v66h-2zM1252 592h2v30h-2zM1254 504h2v90h-2zM1256 402h2v104h-2zM1258 356h2v48h-2zM1260 352h2v54h-2zM1262 404h2v114h-2zM1264 516h2v88h-2zM1266 602h2v28h-2zM1268 540h2v74h-2zM1270 416h2v126h-2zM1272 350h2v68h-2zM1274 350h2v38h-2zM1276 386h2v94h-2zM1278 478h2v94h-2zM1280 570h2v40h-2zM1282 552h2v52h-2zM1284 462h2v92h-2zM1286 386h2v78h-2zM1288 360h2v28h-2zM1290 372h2v68h-2zM1292 438h2v106h-2zM1294 542h2v60h-2zM1296 572h2v36h-2zM1298 488h2v86h-2zM1300 390h2v100h-2zM1302 346h2v46h-2zM1304 346h2v50h-2zM1306 394h2v112h-2zM1308 504h2v96h-2zM1310 598h2v30h-2zM1312 544h2v72h-2zM1314 420h2v126h-2zM1316 340h2v82h-2zM1318 330h2v28h-2zM1320 356h2v90h-2zM1322 444h2v120h-2zM1324 562h2v66h-2zM1326 590h2v44h-2zM1328 492h2v100h-2zM1330 394h2v100h-2zM1332 352h2v44h-2zM1334 356h2v52h-2zM1336 406h2v98h-2zM1338 502h2v82h-2zM1340 582h2v34h-2zM1342 538h2v72h-2zM1344 408h2v132h-2zM1346 340h2v70h-2zM1348 338h2v46h-2zM1350 382h2v118h-2zM1352 498h2v104h-2zM1354 600h2v30h-2zM1356 550h2v64h-2zM1358 454h2v98h-2zM1360 380h2v76h-2zM1362 358h2v24h-2zM1364 372h2v78h-2zM1366 448h2v128h-2zM1368 574h2v64h-2zM1370 588h2v46h-2zM1372 502h2v88h-2zM1374 412h2v92h-2zM1376 368h2v46h-2zM1378 370h2v44h-2zM1380 412h2v102h-2zM1382 512h2v84h-2zM1384 594h2v26h-2zM1386 548h2v66h-2zM1388 428h2v122h-2zM1390 354h2v76h-2zM1392 342h2v28h-2zM1394 368h2v90h-2zM1396 456h2v112h-2zM1398 566h2v52h-2zM1400 568h2v50h-2zM1402 464h2v106h-2zM1404 370h2v96h-2zM1406 332h2v40h-2zM1408 330h2v64h-2zM1410 392h2v128h-2zM1412 518h2v84h-2zM1414 600h2v20h-2zM1416 530h2v76h-2zM1418 420h2v112h-2zM1420 358h2v64h-2zM1422 348h2v46h-2zM1424 392h2v106h-2zM1426 496h2v90h-2zM1428 584h2v34h-2zM1430 550h2v58h-2zM1432 454h2v98h-2zM1434 380h2v76h-2zM1436 358h2v24h-2zM1438 374h2v72h-2zM1440 444h2v102h-2zM1442 544h2v52h-2zM1444 564h2v36h-2zM1446 486h2v80h-2zM1448 402h2v86h-2zM1450 368h2v36h-2zM1452 368h2v40h-2zM1454 406h2v88h-2zM1456 492h2v76h-2zM1458 566h2v32h-2zM1460 538h2v56h-2zM1462 438h2v102h-2zM1464 372h2v68h-2zM1466 358h2v26h-2zM1468 382h2v76h-2zM1470 456h2v100h-2zM1472 554h2v54h-2zM1474 574h2v38h-2zM1476 482h2v94h-2zM1478 394h2v90h-2zM1480 364h2v32h-2zM1482 366h2v66h-2zM1484 430h2v124h-2zM1486 552h2v72h-2zM1488 602h2v34h-2zM1490 520h2v84h-2zM1492 420h2v102h-2zM1494 368h2v54h-2zM1496 370h2v40h-2zM1498 408h2v100h-2zM1500 506h2v88h-2zM1502 592h2v28h-2zM1504 546h2v64h-2zM1506 442h2v106h-2zM1508 376h2v68h-2zM1510 360h2v18h-2zM1512 374h2v66h-2zM1514 438h2v104h-2zM1516 540h2v76h-2zM1518 610h2v26h-2zM1520 526h2v86h-2zM1522 418h2v110h-2zM1524 366h2v54h-2zM1526 366h2v46h-2zM1528 410h2v98h-2zM1530 506h2v80h-2zM1532 584h2v24h-2zM1534 522h2v72h-2zM1536 418h2v106h-2zM1538 352h2v68h-2zM1540 336h2v30h-2zM1542 364h2v76h-2zM1544 438h2v108h-2zM1546 544h2v68h-2zM1548 582h2v38h-2zM1550 488h2v96h-2zM1552 394h2v96h-2zM1554 360h2v36h-2zM1556 368h2v60h-2zM1558 426h2v108h-2zM1560 532h2v70h-2zM1562 584h2v28h-2zM1564 504h2v82h-2zM1566 398h2v108h-2zM1568 346h2v54h-2zM1570 352h2v38h-2zM1572 388h2v82h-2zM1574 468h2v96h-2zM1576 562h2v46h-2zM1578 550h2v56h-2zM1580 444h2v108h-2zM1582 368h2v78h-2zM1584 346h2v24h-2zM1586 366h2v78h-2zM1588 442h2v112h-2zM1590 552h2v56h-2zM1592 568h2v40h-2zM1594 478h2v92h-2zM1596 388h2v92h-2zM1598 350h2v40h-2zM1600 352h2v64h-2zM1602 414h2v122h-2zM1604 534h2v72h-2zM1606 588h2v28h-2zM1608 514h2v76h-2zM1610 418h2v98h-2zM1612 366h2v54h-2zM1614 360h2v22h-2zM1616 380h2v68h-2zM1618 446h2v94h-2zM1620 538h2v52h-2zM1622 566h2v28h-2zM1624 480h2v88h-2zM1626 386h2v96h-2zM1628 348h2v40h-2zM1630 352h2v60h-2zM1632 410h2v108h-2zM1634 516h2v74h-2zM1636 588h2v24h-2zM1638 528h2v72h-2zM1640 414h2v116h-2zM1642 358h2v58h-2zM1644 358h2v38h-2zM1646 394h2v90h-2zM1648 482h2v96h-2zM1650 576h2v46h-2zM1652 566h2v54h-2zM1654 458h2v110h-2zM1656 382h2v78h-2zM1658 362h2v22h-2zM1660 378h2v70h-2zM1662 446h2v104h-2zM1664 548h2v52h-2zM1666 560h2v40h-2zM1668 476h2v86h-2zM1670 398h2v80h-2zM1672 366h2v34h-2zM1674 366h2v48h-2zM1676 412h2v90h-2zM1678 500h2v74h-2zM1680 572h2v30h-2zM1682 532h2v66h-2zM1684 420h2v114h-2zM1686 364h2v58h-2zM1688 362h2v30h-2zM1690 390h2v88h-2zM1692 476h2v106h-2zM1694 580h2v50h-2zM1696 578h2v48h-2zM1698 476h2v104h-2zM1700 380h2v98h-2zM1702 342h2v40h-2zM1704 354h2v72h-2zM1706 424h2v122h-2zM1708 544h2v68h-2zM1710 584h2v30h-2zM1712 508h2v78h-2zM1714 414h2v96h-2zM1716 366h2v50h-2zM1718 366h2v44h-2zM1720 408h2v94h-2zM1722 500h2v84h-2zM1724 582h2v36h-2zM1726 544h2v64h-2zM1728 442h2v104h-2zM1730 374h2v70h-2zM1732 356h2v22h-2zM1734 376h2v70h-2zM1736 444h2v90h-2zM1738 532h2v58h-2zM1740 576h2v26h-2zM1742 494h2v84h-2zM1744 394h2v102h-2zM1746 346h2v50h-2zM1748 344h2v38h-2zM1750 380h2v76h-2zM1752 454h2v76h-2zM1754 528h2v72h-2zM1756 598h2v36h-2zM1758 612h2v12h-2zM1760 612h2v12h-2zM1762 600h2v14h-2zM1764 600h2v12h-2zM1766 588h2v14h-2zM1768 584h2v16h-2zM1770 572h2v14h-2zM1772 570h2v16h-2zM1774 556h2v16h-2zM1776 556h2v16h-2zM1778 540h2v18h-2zM1780 540h2v18h-2zM1782 524h2v18h-2zM1784 406h2v132h-2zM1786 278h2v130h-2zM1788 288h2v18h-2zM1790 304h2v26h-2zM1792 328h2v34h-2zM1794 360h2v24h-2zM1796 382h2v64h-2zM1798 444h2v90h-2zM1800 532h2v66h-2zM1802 524h2v102h-2zM1804 394h2v132h-2zM1806 368h2v28h-2zM1808 388h2v70h-2zM1810 456h2v102h-2zM1812 556h2v62h-2zM1814 598h2v30h-2zM1816 506h2v94h-2zM1818 398h2v110h-2zM1820 354h2v46h-2zM1822 354h2v58h-2zM1824 410h2v116h-2zM1826 524h2v70h-2zM1828 578h2v26h-2zM1830 508h2v72h-2zM1832 412h2v98h-2zM1834 362h2v52h-2zM1836 360h2v32h-2zM1838 390h2v90h-2zM1840 478h2v94h-2zM1842 570h2v36h-2zM1844 544h2v54h-2zM1846 450h2v96h-2zM1848 380h2v72h-2zM1850 356h2v26h-2zM1852 372h2v62h-2zM1854 432h2v98h-2zM1856 528h2v62h-2zM1858 572h2v28h-2zM1860 494h2v80h-2zM1862 392h2v104h-2zM1864 338h2v56h-2zM1866 336h2v46h-2zM1868 380h2v98h-2zM1870 476h2v98h-2zM1872 572h2v46h-2zM1874 556h2v58h-2zM1876 450h2v108h-2zM1878 374h2v78h-2zM1880 354h2v24h-2zM1882 376h2v86h-2zM1884 460h2v116h-2zM1886 574h2v58h-2zM1888 582h2v54h-2zM1890 478h2v106h-2zM1892 384h2v96h-2zM1894 344h2v42h-2zM1896 342h2v54h-2zM1898 394h2v108h-2zM1900 500h2v88h-2zM1902 586h2v34h-2zM1904 542h2v70h-2zM1906 418h2v126h-2zM1908 348h2v72h-2zM1910 342h2v32h-2zM1912 372h2v96h-2zM1914 466h2v108h-2zM1916 572h2v50h-2zM1918 572h2v54h-2zM1920 462h2v112h-2zM1922 376h2v88h-2zM1924 350h2v28h-2zM1926 358h2v66h-2zM1928 422h2v118h-2zM1930 538h2v70h-2zM1932 584h2v32h-2zM1934 496h2v90h-2zM1936 396h2v102h-2zM1938 348h2v50h-2zM1940 344h2v60h-2zM1942 402h2v122h-2zM1944 522h2v86h-2zM1946 606h2v24h-2zM1948 540h2v72h-2zM1950 436h2v106h-2zM1952 378h2v60h-2zM1954 370h2v30h-2zM1956 398h2v86h-2zM1958 482h2v102h-2zM1960 582h2v46h-2zM1962 572h2v52h-2zM1964 474h2v100h-2zM1966 394h2v82h-2zM1968 364h2v32h-2zM1970 368h2v54h-2zM1972 420h2v110h-2zM1974 528h2v70h-2zM1976 588h2v22h-2zM1978 520h2v70h-2zM1980 420h2v102h-2zM1982 366h2v56h-2zM1984 360h2v40h-2zM1986 398h2v96h-2zM1988 492h2v80h-2zM1990 570h2v24h-2zM1992 532h2v54h-2zM1994 442h2v92h-2zM1996 378h2v66h-2zM1998 360h2v20h-2zM2000 374h2v68h-2zM2002 440h2v112h-2zM2004 550h2v64h-2zM2006 590h2v30h-2zM2008 504h2v88h-2zM2010 400h2v106h-2zM2012 352h2v50h-2zM2014 350h2v52h-2zM2016 400h2v102h-2zM2018 500h2v78h-2zM2020 576h2v26h-2zM2022 514h2v70h-2zM2024 414h2v102h-2zM2026 356h2v60h-2zM2028 346h2v30h-2zM2030 374h2v88h-2zM2032 460h2v112h-2zM2034 570h2v52h-2zM2036 574h2v48h-2zM2038 466h2v110h-2zM2040 370h2v98h-2zM2042 334h2v38h-2zM2044 340h2v66h-2zM2046 404h2v114h-2zM2048 516h2v72h-2zM2050 584h2v22h-2zM2052 510h2v76h-2zM2054 404h2v108h-2zM2056 354h2v52h-2zM2058 358h2v38h-2zM2060 394h2v80h-2zM2062 472h2v86h-2zM2064 556h2v48h-2zM2066 566h2v46h-2zM2068 470h2v98h-2zM2070 398h2v74h-2zM2072 376h2v24h-2zM2074 386h2v62h-2zM2076 446h2v100h-2zM2078 544h2v70h-2zM2080 606h2v26h-2zM2082 520h2v88h-2zM2084 404h2v118h-2zM2086 346h2v60h-2zM2088 344h2v48h-2zM2090 390h2v100h-2zM2092 488h2v86h-2zM2094 572h2v36h-2zM2096 552h2v58h-2zM2098 440h2v114h-2zM2100 374h2v68h-2zM2102 364h2v32h-2zM2104 394h2v90h-2zM2106 482h2v94h-2zM2108 574h2v42h-2zM2110 554h2v54h-2zM2112 466h2v90h-2zM2114 394h2v74h-2zM2116 366h2v30h-2zM2118 376h2v68h-2zM2120 442h2v120h-2zM2122 560h2v66h-2zM2124 592h2v38h-2zM2126 508h2v86h-2zM2128 404h2v106h-2zM2130 352h2v54h-2zM2132 356h2v46h-2zM2134 400h2v100h-2zM2136 498h2v86h-2zM2138 582h2v28h-2zM2140 542h2v58h-2zM2142 444h2v100h-2zM2144 370h2v76h-2zM2146 350h2v22h-2zM2148 366h2v74h-2zM2150 438h2v114h-2zM2152 550h2v60h-2zM2154 572h2v38h-2zM2156 482h2v92h-2zM2158 384h2v100h-2zM2160 342h2v44h-2zM2162 344h2v46h-2zM2164 388h2v98h-2zM2166 484h2v82h-2zM2168 564h2v30h-2zM2170 526h2v62h-2zM2172 420h2v108h-2zM2174 362h2v60h-2zM2176 358h2v26h-2zM2178 382h2v74h-2zM2180 454h2v98h-2zM2182 550h2v50h-2zM2184 556h2v42h-2zM2186 472h2v86h-2zM2188 398h2v76h-2zM2190 366h2v34h-2zM2192 374h2v64h-2zM2194 436h2v116h-2zM2196 550h2v60h-2zM2198 570h2v40h-2zM2200 492h2v80h-2zM2202 402h2v92h-2zM2204 350h2v54h-2zM2206 344h2v46h-2zM2208 388h2v100h-2zM2210 486h2v94h-2zM2212 578h2v44h-2zM2214 572h2v54h-2zM2216 462h2v112h-2zM2218 386h2v78h-2zM2220 370h2v18h-2zM2222 384h2v58h-2zM2224 440h2v92h-2zM2226 530h2v60h-2zM2228 574h2v26h-2zM2230 490h2v86h-2zM2232 380h2v112h-2zM2234 330h2v52h-2zM2236 334h2v58h-2zM2238 390h2v112h-2zM2240 500h2v86h-2zM2242 584h2v28h-2zM2244 530h2v68h-2zM2246 420h2v112h-2zM2248 354h2v68h-2zM2250 346h2v32h-2zM2252 376h2v90h-2zM2254 464h2v102h-2zM2256 564h2v38h-2zM2258 540h2v58h-2zM2260 436h2v106h-2zM2262 362h2v76h-2zM2264 338h2v26h-2zM2266 346h2v68h-2zM2268 412h2v120h-2zM2270 530h2v80h-2zM2272 604h2v26h-2zM2274 522h2v84h-2zM2276 412h2v112h-2zM2278 360h2v54h-2zM2280 356h2v36h-2zM2282 390h2v86h-2zM2284 474h2v90h-2zM2286 562h2v40h-2zM2288 554h2v50h-2zM2290 442h2v114h-2zM2292 358h2v86h-2zM2294 340h2v28h-2zM2296 366h2v86h-2zM2298 450h2v118h-2zM2300 566h2v62h-2zM2302 586h2v44h-2zM2304 482h2v106h-2zM2306 378h2v106h-2zM2308 332h2v48h-2zM2310 328h2v64h-2zM2312 390h2v118h-2zM2314 506h2v88h-2zM2316 592h2v32h-2zM2318 542h2v74h-2zM2320 424h2v120h-2zM2322 358h2v68h-2zM2324 350h2v34h-2zM2326 382h2v84h-2zM2328 464h2v98h-2zM2330 560h2v52h-2zM2332 574h2v38h-2zM2334 470h2v106h-2zM2336 376h2v96h-2zM2338 348h2v30h-2zM2340 354h2v62h-2zM2342 414h2v108h-2zM2344 520h2v68h-2zM2346 584h2v20h-2zM2348 508h2v78h-2zM2350 402h2v108h-2zM2352 352h2v52h-2zM2354 352h2v44h-2zM2356 394h2v98h-2zM2358 490h2v94h-2zM2360 582h2v42h-2zM2362 572h2v56h-2zM2364 458h2v116h-2zM2366 382h2v78h-2zM2368 368h2v20h-2zM2370 386h2v78h-2zM2372 462h2v110h-2zM2374 570h2v60h-2zM2376 588h2v46h-2zM2378 480h2v110h-2zM2380 370h2v112h-2zM2382 328h2v44h-2zM2384 326h2v54h-2zM2386 378h2v108h-2zM2388 484h2v88h-2zM2390 570h2v34h-2zM2392 540h2v64h-2zM2394 416h2v126h-2zM2396 346h2v72h-2zM2398 340h2v42h-2zM2400 380h2v104h-2zM2402 482h2v100h-2zM2404 580h2v40h-2zM2406 554h2v56h-2zM2408 458h2v98h-2zM2410 384h2v76h-2zM2412 360h2v26h-2zM2414 374h2v64h-2zM2416 436h2v100h-2zM2418 534h2v72h-2zM2420 604h2v22h-2zM2422 536h2v80h-2zM2424 408h2v130h-2zM2426 348h2v62h-2zM2428 346h2v42h-2zM2430 386h2v94h-2zM2432 478h2v90h-2zM2434 566h2v34h-2zM2436 532h2v66h-2zM2438 408h2v126h-2zM2440 332h2v78h-2zM2442 318h2v28h-2zM2444 344h2v98h-2zM2446 440h2v130h-2zM2448 568h2v64h-2zM2450 580h2v48h-2zM2452 482h2v100h-2zM2454 384h2v100h-2zM2456 344h2v42h-2zM2458 352h2v60h-2zM2460 410h2v106h-2zM2462 514h2v74h-2zM2464 586h2v20h-2zM2466 518h2v72h-2zM2468 464h2v56h-2z"/><path fill="#00ff00" d="M156 952h2v44h-2zM158 994h2v90h-2zM160 1082h2v48h-2zM162 1070h2v38h-2zM164 1054h2v18h-2zM166 1064h2v14h-2zM168 1066h2v8h-2zM170 1062h2v6h-2zM172 1064h2v8h-2zM174 1054h2v12h-2zM176 1044h2v12h-2zM178 1040h2v14h-2zM180 1046h2v20h-2zM182 1028h2v20h-2zM184 1030h2v14h-2zM186 1042h2v14h-2zM188 1026h2v24h-2zM190 1010h2v18h-2zM192 1022h2v16h-2zM194 1032h2v10h-2zM196 1014h2v20h-2zM198 1002h2v14h-2zM200 1010h2v12h-2zM202 270h2v758h-2zM204 108h2v164h-2zM206 184h2v676h-2zM208 820h2v44h-2zM210 738h2v84h-2zM212 672h2v68h-2zM214 642h2v116h-2zM216 756h2v226h-2zM218 980h2v112h-2zM220 992h2v54h-2zM222 984h2v10h-2zM224 988h2v8h-2zM226 988h2v12h-2zM228 976h2v14h-2zM230 978h2v8h-2zM232 984h2v8h-2zM234 986h2v10h-2zM236 980h2v8h-2zM238 980h2v6h-2zM240 984h2v8h-2zM242 988h2v2h-2zM244 982h2v8h-2zM246 976h2v8h-2zM248 978h2v8h-2zM250 984h2v6h-2zM252 978h2v10h-2zM254 970h2v10h-2zM256 970h2v10h-2zM258 978h2v16h-2zM260 992h2v8h-2zM262 978h2v18h-2zM264 966h2v14h-2zM266 976h2v16h-2zM268 980h2v16h-2zM270 968h2v14h-2zM272 978h2v12h-2zM274 976h2v14h-2zM276 966h2v16h-2zM278 980h2v14h-2zM280 976h2v14h-2zM282 968h2v10h-2zM284 966h2v12h-2zM286 976h2v12h-2zM288 970h2v12h-2zM290 966h2v14h-2zM292 978h2v14h-2zM294 974h2v14h-2zM296 968h2v8h-2zM298 974h2v10h-2zM300 982h2v6h-2zM302 974h2v12h-2zM304 966h2v10h-2zM306 970h2v8h-2zM308 976h2v4h-2zM310 970h2v8h-2zM312 966h2v12h-2zM314 976h2v12h-2zM316 972h2v12h-2zM318 966h2v12h-2zM320 976h2v12h-2zM322 972h2v14h-2zM324 962h2v12h-2zM326 972h2v14h-2zM328 976h2v8h-2zM330 968h2v10h-2zM332 976h2v12h-2zM334 970h2v16h-2zM336 958h2v14h-2zM338 962h2v12h-2zM340 972h2v6h-2zM342 970h2v6h-2zM344 968h2v8h-2zM346 974h2v8h-2zM348 968h2v12h-2zM350 960h2v12h-2zM352 970h2v14h-2zM354 972h2v14h-2zM356 960h2v14h-2zM358 968h2v12h-2zM360 964h2v12h-2zM362 958h2v14h-2zM364 970h2v16h-2zM366 968h2v16h-2zM368 956h2v14h-2zM370 958h2v12h-2zM372 968h2v10h-2zM374 962h2v10h-2zM376 958h2v6h-2zM378 962h2v12h-2zM380 972h2v8h-2zM382 968h2v14h-2zM384 956h2v14h-2zM386 968h2v18h-2zM388 976h2v14h-2zM390 964h2v14h-2zM392 964h2v10h-2zM394 972h2v8h-2zM396 972h2v8h-2zM398 964h2v10h-2zM400 970h2v8h-2zM402 968h2v10h-2zM404 960h2v10h-2zM406 958h2v14h-2zM408 970h2v14h-2zM410 972h2v10h-2zM412 962h2v12h-2zM414 958h2v8h-2zM416 964h2v12h-2zM418 970h2v12h-2zM420 958h2v14h-2zM422 970h2v16h-2zM424 964h2v14h-2zM426 958h2v10h-2zM428 966h2v10h-2zM430 964h2v10h-2zM432 960h2v10h-2zM434 968h2v10h-2zM436 964h2v14h-2zM438 950h2v16h-2zM440 962h2v12h-2zM442 972h2v4h-2zM444 968h2v12h-2zM446 958h2v12h-2zM448 966h2v14h-2zM450 970h2v12h-2zM452 960h2v12h-2zM454 960h2v10h-2zM456 968h2v8h-2zM458 968h2v8h-2zM460 956h2v14h-2zM462 950h2v18h-2zM464 966h2v20h-2zM466 960h2v18h-2zM468 952h2v14h-2zM470 964h2v14h-2zM472 962h2v10h-2zM474 960h2v6h-2zM476 964h2v12h-2zM478 968h2v12h-2zM480 960h2v10h-2zM482 966h2v10h-2zM484 968h2v8h-2zM486 962h2v8h-2zM488 964h2v6h-2zM490 964h2v8h-2zM492 960h2v6h-2zM494 960h2v10h-2zM496 968h2v10h-2zM498 964h2v12h-2zM500 954h2v12h-2zM502 964h2v14h-2zM504 972h2v10h-2zM506 960h2v14h-2zM508 958h2v4h-2zM510 960h2v12h-2zM512 964h2v12h-2zM514 952h2v14h-2zM516 948h2v18h-2zM518 964h2v16h-2zM520 958h2v12h-2zM522 958h2v2h-2zM524 958h2v10h-2zM526 966h2v10h-2zM528 954h2v14h-2zM530 950h2v6h-2zM532 952h2v14h-2zM534 960h2v14h-2zM536 950h2v12h-2zM538 954h2v12h-2zM540 964h2v12h-2zM542 968h2v12h-2zM544 956h2v14h-2zM546 954h2v12h-2zM548 964h2v12h-2zM550 956h2v10h-2zM552 962h2v8h-2zM554 958h2v12h-2zM556 946h2v14h-2zM558 952h2v16h-2zM560 966h2v6h-2zM562 962h2v8h-2zM564 956h2v8h-2zM566 958h2v8h-2zM568 964h2v8h-2zM570 964h2v10h-2zM572 956h2v12h-2zM574 966h2v12h-2zM576 960h2v14h-2zM578 954h2v8h-2zM580 960h2v12h-2zM582 966h2v10h-2zM584 956h2v12h-2zM586 954h2v10h-2zM588 962h2v10h-2zM590 958h2v14h-2zM592 950h2v10h-2zM594 954h2v12h-2zM596 960h2v12h-2zM598 948h2v14h-2zM600 958h2v14h-2zM602 970h2v6h-2zM604 960h2v14h-2zM606 950h2v12h-2zM608 952h2v10h-2zM610 960h2v8h-2zM612 960h2v10h-2zM614 952h2v10h-2zM616 954h2v10h-2zM618 962h2v12h-2zM620 954h2v12h-2zM622 950h2v12h-2zM624 960h2v12h-2zM626 968h2v6h-2zM628 960h2v10h-2zM630 954h2v8h-2zM632 956h2v8h-2zM634 962h2v8h-2zM636 964h2v8h-2zM638 956h2v10h-2zM640 960h2v10h-2zM642 968h2v8h-2zM644 960h2v14h-2zM646 952h2v10h-2zM648 956h2v70h-2zM650 988h2v104h-2zM652 884h2v106h-2zM654 936h2v56h-2zM656 980h2v10h-2zM658 976h2v10h-2zM660 980h2v14h-2zM662 950h2v32h-2zM664 930h2v24h-2zM666 952h2v22h-2zM668 952h2v18h-2zM670 940h2v14h-2zM672 942h2v12h-2zM674 952h2v12h-2zM676 948h2v8h-2zM678 952h2v8h-2zM680 954h2v10h-2zM682 944h2v12h-2zM684 954h2v12h-2zM686 956h2v12h-2zM688 946h2v12h-2zM690 950h2v8h-2zM692 956h2v8h-2zM694 958h2v10h-2zM696 948h2v12h-2zM698 946h2v10h-2zM700 954h2v12h-2zM702 954h2v14h-2zM704 940h2v16h-2zM706 950h2v14h-2zM708 962h2v4h-2zM710 952h2v14h-2zM712 942h2v12h-2zM714 946h2v12h-2zM716 956h2v8h-2zM718 954h2v10h-2zM720 948h2v8h-2zM722 946h2v10h-2zM724 954h2v12h-2zM726 948h2v12h-2zM728 944h2v6h-2zM730 944h2v8h-2zM732 950h2v6h-2zM734 950h2v6h-2zM736 948h2v14h-2zM738 960h2v12h-2zM740 950h2v12h-2zM742 952h2v8h-2zM744 954h2v10h-2zM746 944h2v12h-2zM748 942h2v8h-2zM750 948h2v12h-2zM752 958h2v8h-2zM754 954h2v8h-2zM756 950h2v6h-2zM758 954h2v8h-2zM760 946h2v10h-2zM762 942h2v12h-2zM764 952h2v12h-2zM766 956h2v8h-2zM768 952h2v6h-2zM770 952h2v10h-2zM772 958h2v8h-2zM774 950h2v10h-2zM776 948h2v10h-2zM778 956h2v12h-2zM780 956h2v14h-2zM782 946h2v12h-2zM784 950h2v10h-2zM786 958h2v8h-2zM788 950h2v12h-2zM790 942h2v14h-2zM792 954h2v14h-2zM794 954h2v10h-2zM796 946h2v10h-2zM798 946h2v10h-2zM800 954h2v10h-2zM802 956h2v6h-2zM804 950h2v8h-2zM806 946h2v12h-2zM808 956h2v10h-2zM810 954h2v10h-2zM812 952h2v4h-2zM814 952h2v8h-2zM816 958h2v8h-2zM818 956h2v8h-2zM820 950h2v8h-2zM822 954h2v8h-2zM824 954h2v12h-2zM826 946h2v10h-2zM828 946h2v14h-2zM830 958h2v12h-2zM832 946h2v16h-2zM834 942h2v6h-2zM836 944h2v14h-2zM838 956h2v14h-2zM840 960h2v10h-2zM842 950h2v12h-2zM844 950h2v6h-2zM846 954h2v4h-2zM848 950h2v6h-2zM850 946h2v6h-2zM852 946h2v10h-2zM854 954h2v8h-2zM856 950h2v10h-2zM858 944h2v8h-2zM860 946h2v16h-2zM862 960h2v14h-2zM864 950h2v12h-2zM866 956h2v8h-2zM868 960h2v4h-2zM870 952h2v10h-2zM872 944h2v10h-2zM874 946h2v12h-2zM876 956h2v10h-2zM878 950h2v12h-2zM880 944h2v8h-2zM882 950h2v12h-2zM884 958h2v8h-2zM886 946h2v14h-2zM888 942h2v14h-2zM890 954h2v14h-2zM892 952h2v14h-2zM894 944h2v10h-2zM896 946h2v14h-2zM898 958h2v10h-2zM900 954h2v12h-2zM902 946h2v10h-2zM904 948h2v12h-2zM906 958h2v12h-2zM908 948h2v12h-2zM910 954h2v10h-2zM912 954h2v12h-2zM914 944h2v12h-2zM916 944h2v6h-2zM918 948h2v10h-2zM920 956h2v10h-2zM922 950h2v10h-2zM924 948h2v4h-2zM926 950h2v12h-2zM928 958h2v10h-2zM930 946h2v14h-2zM932 942h2v12h-2zM934 952h2v16h-2zM936 966h2v6h-2zM938 950h2v18h-2zM940 938h2v14h-2zM942 946h2v16h-2zM944 958h2v10h-2zM946 944h2v16h-2zM948 940h2v10h-2zM950 948h2v18h-2zM952 964h2v8h-2zM954 954h2v14h-2zM956 944h2v12h-2zM958 944h2v6h-2zM960 948h2v12h-2zM962 958h2v8h-2zM964 954h2v10h-2zM966 948h2v8h-2zM968 954h2v10h-2zM970 952h2v12h-2zM972 940h2v14h-2zM974 952h2v12h-2zM976 952h2v12h-2zM978 942h2v12h-2zM980 948h2v14h-2zM982 958h2v12h-2zM984 946h2v14h-2zM986 942h2v8h-2zM988 948h2v14h-2zM990 956h2v12h-2zM992 942h2v16h-2zM994 938h2v12h-2zM996 948h2v16h-2zM998 960h2v6h-2zM1000 950h2v12h-2zM1002 946h2v10h-2zM1004 954h2v10h-2zM1006 952h2v8h-2zM1008 950h2v10h-2zM1010 958h2v10h-2zM1012 960h2v8h-2zM1014 950h2v12h-2zM1016 946h2v6h-2zM1018 950h2v12h-2zM1020 956h2v12h-2zM1022 948h2v10h-2zM1024 950h2v14h-2zM1026 962h2v10h-2zM1028 954h2v16h-2zM1030 944h2v12h-2zM1032 948h2v16h-2zM1034 962h2v12h-2zM1036 944h2v20h-2zM1038 940h2v14h-2zM1040 952h2v16h-2zM1042 952h2v12h-2zM1044 944h2v44h-2zM1046 986h2v84h-2zM1048 1068h2v44h-2zM1050 1066h2v30h-2zM1052 1050h2v18h-2zM1054 1048h2v4h-2zM1056 1048h2v12h-2zM1058 1058h2v14h-2zM1060 1046h2v22h-2zM1062 1032h2v16h-2zM1064 1030h2v10h-2zM1066 1038h2v10h-2zM1068 1030h2v16h-2zM1070 1018h2v14h-2zM1072 1030h2v16h-2zM1074 1020h2v20h-2zM1076 1008h2v14h-2zM1078 1018h2v14h-2zM1080 1030h2v6h-2zM1082 1014h2v18h-2zM1084 1002h2v14h-2zM1086 1008h2v12h-2zM1088 1016h2v10h-2zM1090 204h2v814h-2zM1092 108h2v98h-2zM1094 120h2v724h-2zM1096 816h2v26h-2zM1098 840h2v24h-2zM1100 832h2v22h-2zM1102 788h2v46h-2zM1104 756h2v100h-2zM1106 854h2v196h-2zM1108 1048h2v98h-2zM1110 1022h2v68h-2zM1112 1012h2v12h-2zM1114 1020h2v8h-2zM1116 1012h2v12h-2zM1118 1008h2v12h-2zM1120 1018h2v12h-2zM1122 1006h2v14h-2zM1124 1004h2v14h-2zM1126 1016h2v14h-2zM1128 1012h2v14h-2zM1130 1000h2v14h-2zM1132 1006h2v10h-2zM1134 1010h2v8h-2zM1136 1002h2v10h-2zM1138 1000h2v6h-2zM1140 998h2v12h-2zM1142 988h2v12h-2zM1144 988h2v12h-2zM1146 998h2v10h-2zM1148 994h2v12h-2zM1150 986h2v10h-2zM1152 988h2v16h-2zM1154 1002h2v12h-2zM1156 998h2v16h-2zM1158 984h2v16h-2zM1160 986h2v10h-2zM1162 994h2v8h-2zM1164 994h2v12h-2zM1166 984h2v12h-2zM1168 984h2v14h-2zM1170 996h2v12h-2zM1172 988h2v16h-2zM1174 978h2v12h-2zM1176 980h2v10h-2zM1178 988h2v6h-2zM1180 986h2v8h-2zM1182 976h2v12h-2zM1184 972h2v12h-2zM1186 982h2v10h-2zM1188 980h2v12h-2zM1190 972h2v10h-2zM1192 976h2v14h-2zM1194 988h2v10h-2zM1196 986h2v10h-2zM1198 980h2v8h-2zM1200 980h2v6h-2zM1202 980h2v8h-2zM1204 972h2v10h-2zM1206 968h2v6h-2zM1208 970h2v16h-2zM1210 984h2v16h-2zM1212 972h2v14h-2zM1214 974h2v4h-2zM1216 976h2v8h-2zM1218 976h2v12h-2zM1220 966h2v12h-2zM1222 966h2v10h-2zM1224 974h2v8h-2zM1226 968h2v10h-2zM1228 966h2v10h-2zM1230 974h2v10h-2zM1232 974h2v10h-2zM1234 968h2v8h-2zM1236 972h2v10h-2zM1238 976h2v12h-2zM1240 964h2v14h-2zM1242 966h2v14h-2zM1244 978h2v12h-2zM1246 968h2v16h-2zM1248 962h2v8h-2zM1250 968h2v14h-2zM1252 980h2v12h-2zM1254 974h2v14h-2zM1256 964h2v12h-2zM1258 964h2v12h-2zM1260 974h2v12h-2zM1262 960h2v16h-2zM1264 958h2v6h-2zM1266 962h2v12h-2zM1268 972h2v12h-2zM1270 974h2v12h-2zM1272 962h2v14h-2zM1274 962h2v10h-2zM1276 970h2v8h-2zM1278 962h2v10h-2zM1280 960h2v10h-2zM1282 968h2v12h-2zM1284 964h2v12h-2zM1286 956h2v10h-2zM1288 954h2v16h-2zM1290 968h2v18h-2zM1292 964h2v16h-2zM1294 956h2v10h-2zM1296 956h2v12h-2zM1298 966h2v12h-2zM1300 966h2v10h-2zM1302 958h2v10h-2zM1304 964h2v12h-2zM1306 966h2v14h-2zM1308 954h2v14h-2zM1310 964h2v10h-2zM1312 964h2v10h-2zM1314 958h2v10h-2zM1316 966h2v10h-2zM1318 956h2v12h-2zM1320 956h2v12h-2zM1322 966h2v10h-2zM1324 966h2v8h-2zM1326 958h2v10h-2zM1328 954h2v8h-2zM1330 960h2v12h-2zM1332 964h2v14h-2zM1334 952h2v14h-2zM1336 954h2v14h-2zM1338 966h2v12h-2zM1340 956h2v12h-2zM1342 964h2v10h-2zM1344 966h2v10h-2zM1346 952h2v16h-2zM1348 948h2v16h-2zM1350 962h2v16h-2zM1352 960h2v10h-2zM1354 958h2v12h-2zM1356 968h2v10h-2zM1358 964h2v10h-2zM1360 958h2v8h-2zM1362 956h2v8h-2zM1364 962h2v10h-2zM1366 962h2v10h-2zM1368 954h2v10h-2zM1370 954h2v12h-2zM1372 964h2v12h-2zM1374 960h2v14h-2zM1376 950h2v12h-2zM1378 950h2v6h-2zM1380 954h2v10h-2zM1382 962h2v8h-2zM1384 958h2v12h-2zM1386 950h2v10h-2zM1388 950h2v16h-2zM1390 964h2v12h-2zM1392 962h2v14h-2zM1394 950h2v14h-2zM1396 950h2v2h-2zM1398 950h2v12h-2zM1400 958h2v14h-2zM1402 946h2v14h-2zM1404 952h2v14h-2zM1406 960h2v10h-2zM1408 950h2v12h-2zM1410 950h2v10h-2zM1412 958h2v12h-2zM1414 962h2v10h-2zM1416 954h2v10h-2zM1418 954h2v14h-2zM1420 966h2v12h-2zM1422 950h2v18h-2zM1424 944h2v12h-2zM1426 954h2v12h-2zM1428 956h2v8h-2zM1430 950h2v12h-2zM1432 960h2v14h-2zM1434 952h2v12h-2zM1436 956h2v10h-2zM1438 964h2v8h-2zM1440 956h2v10h-2zM1442 954h2v4h-2zM1444 954h2v8h-2zM1446 958h2v10h-2zM1448 952h2v8h-2zM1450 952h2v14h-2zM1452 964h2v10h-2zM1454 956h2v12h-2zM1456 952h2v6h-2zM1458 956h2v8h-2zM1460 954h2v8h-2zM1462 950h2v6h-2zM1464 952h2v6h-2zM1466 956h2v12h-2zM1468 966h2v10h-2zM1470 958h2v12h-2zM1472 952h2v8h-2zM1474 956h2v12h-2zM1476 966h2v10h-2zM1478 958h2v12h-2zM1480 952h2v8h-2zM1482 958h2v10h-2zM1484 956h2v14h-2zM1486 944h2v14h-2zM1488 950h2v14h-2zM1490 962h2v8h-2zM1492 960h2v14h-2zM1494 948h2v14h-2zM1496 950h2v10h-2zM1498 958h2v8h-2zM1500 956h2v10h-2zM1502 950h2v8h-2zM1504 952h2v12h-2zM1506 958h2v16h-2zM1508 946h2v14h-2zM1510 948h2v14h-2zM1512 960h2v10h-2zM1514 950h2v12h-2zM1516 956h2v12h-2zM1518 962h2v12h-2zM1520 952h2v12h-2zM1522 954h2v10h-2zM1524 956h2v16h-2zM1526 944h2v14h-2zM1528 952h2v16h-2zM1530 962h2v12h-2zM1532 952h2v120h-2zM1534 1070h2v118h-2zM1536 1036h2v152h-2zM1538 884h2v154h-2zM1540 942h2v74h-2zM1542 1010h2v20h-2zM1544 992h2v20h-2zM1546 1000h2v26h-2zM1548 976h2v26h-2zM1550 984h2v12h-2zM1552 988h2v16h-2zM1554 1002h2v16h-2zM1556 992h2v16h-2zM1558 986h2v8h-2zM1560 992h2v6h-2zM1562 994h2v6h-2zM1564 980h2v16h-2zM1566 972h2v12h-2zM1568 982h2v12h-2zM1570 976h2v16h-2zM1572 964h2v14h-2zM1574 966h2v14h-2zM1576 974h2v16h-2zM1578 956h2v20h-2zM1580 948h2v10h-2zM1582 948h2v14h-2zM1584 960h2v14h-2zM1586 960h2v10h-2zM1588 954h2v8h-2zM1590 960h2v12h-2zM1592 962h2v12h-2zM1594 954h2v10h-2zM1596 958h2v10h-2zM1598 962h2v10h-2zM1600 954h2v10h-2zM1602 956h2v12h-2zM1604 966h2v8h-2zM1606 964h2v12h-2zM1608 954h2v12h-2zM1610 960h2v14h-2zM1612 968h2v8h-2zM1614 954h2v16h-2zM1616 950h2v12h-2zM1618 960h2v14h-2zM1620 964h2v10h-2zM1622 954h2v12h-2zM1624 962h2v12h-2zM1626 966h2v12h-2zM1628 956h2v12h-2zM1630 956h2v2h-2zM1632 954h2v10h-2zM1634 962h2v10h-2zM1636 954h2v10h-2zM1638 954h2v8h-2zM1640 960h2v10h-2zM1642 960h2v10h-2zM1644 954h2v8h-2zM1646 954h2v8h-2zM1648 960h2v8h-2zM1650 962h2v8h-2zM1652 956h2v8h-2zM1654 956h2v8h-2zM1656 962h2v12h-2zM1658 966h2v10h-2zM1660 958h2v10h-2zM1662 958h2v12h-2zM1664 968h2v12h-2zM1666 958h2v14h-2zM1668 954h2v10h-2zM1670 962h2v10h-2zM1672 964h2v10h-2zM1674 954h2v12h-2zM1676 960h2v8h-2zM1678 960h2v6h-2zM1680 954h2v8h-2zM1682 950h2v10h-2zM1684 958h2v10h-2zM1686 960h2v8h-2zM1688 954h2v8h-2zM1690 952h2v4h-2zM1692 954h2v8h-2zM1694 960h2v10h-2zM1696 962h2v10h-2zM1698 952h2v12h-2zM1700 948h2v6h-2zM1702 952h2v16h-2zM1704 966h2v10h-2zM1706 958h2v14h-2zM1708 948h2v12h-2zM1710 958h2v12h-2zM1712 956h2v12h-2zM1714 950h2v14h-2zM1716 962h2v16h-2zM1718 954h2v14h-2zM1720 950h2v6h-2zM1722 954h2v12h-2zM1724 964h2v10h-2zM1726 958h2v14h-2zM1728 948h2v12h-2zM1730 952h2v14h-2zM1732 964h2v12h-2zM1734 962h2v12h-2zM1736 952h2v12h-2zM1738 962h2v10h-2zM1740 966h2v8h-2zM1742 956h2v12h-2zM1744 952h2v8h-2zM1746 958h2v12h-2zM1748 962h2v12h-2zM1750 954h2v10h-2zM1752 956h2v10h-2zM1754 964h2v8h-2zM1756 958h2v12h-2zM1758 950h2v12h-2zM1760 960h2v12h-2zM1762 952h2v12h-2zM1764 954h2v8h-2zM1766 960h2v10h-2zM1768 960h2v12h-2zM1770 952h2v10h-2zM1772 960h2v10h-2zM1774 964h2v4h-2zM1776 956h2v10h-2zM1778 950h2v8h-2zM1780 952h2v10h-2zM1782 960h2v12h-2zM1784 964h2v8h-2zM1786 950h2v16h-2zM1788 946h2v10h-2zM1790 954h2v14h-2zM1792 962h2v10h-2zM1794 954h2v10h-2zM1796 952h2v12h-2zM1798 960h2v14h-2zM1800 946h2v16h-2zM1802 952h2v14h-2zM1804 964h2v6h-2zM1806 956h2v10h-2zM1808 950h2v8h-2zM1810 954h2v12h-2zM1812 964h2v8h-2zM1814 960h2v12h-2zM1816 952h2v10h-2zM1818 960h2v8h-2zM1820 962h2v8h-2zM1822 956h2v8h-2zM1824 960h2v6h-2zM1826 956h2v10h-2zM1828 948h2v10h-2zM1830 952h2v10h-2zM1832 960h2v6h-2zM1834 960h2v6h-2zM1836 952h2v10h-2zM1838 948h2v8h-2zM1840 954h2v12h-2zM1842 962h2v8h-2zM1844 958h2v6h-2zM1846 958h2v6h-2zM1848 962h2v4h-2zM1850 954h2v10h-2zM1852 950h2v12h-2zM1854 960h2v12h-2zM1856 960h2v10h-2zM1858 952h2v10h-2zM1860 956h2v12h-2zM1862 966h2v6h-2zM1864 960h2v12h-2zM1866 954h2v8h-2zM1868 954h2v10h-2zM1870 960h2v10h-2zM1872 950h2v12h-2zM1874 952h2v10h-2zM1876 960h2v8h-2zM1878 964h2v6h-2zM1880 956h2v10h-2zM1882 952h2v6h-2zM1884 954h2v10h-2zM1886 962h2v8h-2zM1888 956h2v8h-2zM1890 956h2v10h-2zM1892 964h2v10h-2zM1894 960h2v10h-2zM1896 952h2v10h-2zM1898 948h2v10h-2zM1900 956h2v12h-2zM1902 958h2v8h-2zM1904 952h2v8h-2zM1906 952h2v12h-2zM1908 962h2v10h-2zM1910 958h2v12h-2zM1912 950h2v14h-2zM1914 962h2v12h-2zM1916 962h2v12h-2zM1918 950h2v14h-2zM1920 948h2v14h-2zM1922 960h2v12h-2zM1924 956h2v14h-2zM1926 948h2v10h-2zM1928 950h2v10h-2zM1930 958h2v8h-2zM1932 956h2v10h-2zM1934 950h2v26h-2zM1936 974h2v68h-2zM1938 1040h2v64h-2zM1940 1102h2v24h-2zM1942 1074h2v30h-2zM1944 1060h2v16h-2zM1946 1050h2v12h-2zM1948 1044h2v14h-2zM1950 1050h2v18h-2zM1952 1034h2v18h-2zM1954 1036h2v10h-2zM1956 1042h2v10h-2zM1958 1026h2v18h-2zM1960 1020h2v12h-2zM1962 1030h2v12h-2zM1964 1018h2v18h-2zM1966 1006h2v14h-2zM1968 1002h2v10h-2zM1970 1010h2v12h-2zM1972 1012h2v12h-2zM1974 998h2v16h-2zM1976 994h2v10h-2zM1978 1002h2v8h-2zM1980 1000h2v6h-2zM1982 250h2v752h-2zM1984 108h2v144h-2zM1986 164h2v666h-2zM1988 828h2v10h-2zM1990 830h2v16h-2zM1992 756h2v76h-2zM1994 700h2v58h-2zM1996 730h2v158h-2zM1998 886h2v128h-2zM2000 948h2v40h-2zM2002 936h2v14h-2zM2004 938h2v8h-2zM2006 930h2v10h-2zM2008 928h2v8h-2zM2010 934h2v10h-2zM2012 940h2v8h-2zM2014 930h2v12h-2zM2016 926h2v8h-2zM2018 932h2v10h-2zM2020 938h2v6h-2zM2022 932h2v8h-2zM2024 928h2v12h-2zM2026 938h2v12h-2zM2028 936h2v12h-2zM2030 928h2v10h-2zM2032 930h2v12h-2zM2034 940h2v12h-2zM2036 940h2v10h-2zM2038 932h2v10h-2zM2040 930h2v10h-2zM2042 938h2v10h-2zM2044 930h2v10h-2zM2046 930h2v4h-2zM2048 932h2v12h-2zM2050 942h2v12h-2zM2052 934h2v12h-2zM2054 934h2v12h-2zM2056 944h2v10h-2zM2058 934h2v18h-2zM2060 920h2v16h-2zM2062 926h2v14h-2zM2064 938h2v10h-2zM2066 934h2v12h-2zM2068 926h2v10h-2zM2070 932h2v10h-2zM2072 936h2v8h-2zM2074 928h2v10h-2zM2076 928h2v12h-2zM2078 938h2v14h-2zM2080 942h2v12h-2zM2082 932h2v12h-2zM2084 936h2v10h-2zM2086 940h2v10h-2zM2088 932h2v10h-2zM2090 932h2v10h-2zM2092 938h2v12h-2zM2094 928h2v12h-2zM2096 926h2v8h-2zM2098 932h2v10h-2zM2100 940h2v4h-2zM2102 936h2v6h-2zM2104 940h2v6h-2zM2106 938h2v10h-2zM2108 928h2v12h-2zM2110 932h2v10h-2zM2112 936h2v12h-2zM2114 928h2v10h-2zM2116 930h2v2h-2zM2118 930h2v10h-2zM2120 938h2v8h-2zM2122 936h2v6h-2zM2124 932h2v6h-2zM2126 928h2v12h-2zM2128 938h2v10h-2zM2130 926h2v14h-2zM2132 926h2v6h-2zM2134 930h2v12h-2zM2136 940h2v8h-2zM2138 936h2v10h-2zM2140 928h2v10h-2zM2142 932h2v12h-2zM2144 940h2v10h-2zM2146 930h2v12h-2zM2148 926h2v8h-2zM2150 932h2v6h-2zM2152 932h2v4h-2zM2154 934h2v6h-2zM2156 938h2v4h-2zM2158 934h2v6h-2zM2160 932h2v8h-2zM2162 938h2v10h-2zM2164 934h2v12h-2zM2166 926h2v14h-2zM2168 938h2v16h-2zM2170 934h2v14h-2zM2172 928h2v8h-2zM2174 932h2v8h-2zM2176 932h2v12h-2zM2178 922h2v12h-2zM2180 928h2v18h-2zM2182 944h2v12h-2zM2184 934h2v14h-2zM2186 930h2v6h-2zM2188 932h2v14h-2zM2190 944h2v10h-2zM2192 934h2v16h-2zM2194 924h2v12h-2zM2196 930h2v10h-2zM2198 938h2v4h-2zM2200 938h2v4h-2zM2202 934h2v6h-2zM2204 930h2v12h-2zM2206 940h2v10h-2zM2208 934h2v12h-2zM2210 926h2v14h-2zM2212 938h2v14h-2zM2214 936h2v12h-2zM2216 930h2v8h-2zM2218 936h2v12h-2zM2220 938h2v14h-2zM2222 926h2v14h-2zM2224 934h2v12h-2zM2226 938h2v8h-2zM2228 932h2v8h-2zM2230 932h2v8h-2zM2232 938h2v10h-2zM2234 934h2v12h-2zM2236 926h2v10h-2zM2238 934h2v12h-2zM2240 942h2v6h-2zM2242 932h2v12h-2zM2244 928h2v10h-2zM2246 936h2v12h-2zM2248 934h2v10h-2zM2250 932h2v10h-2zM2252 940h2v10h-2zM2254 944h2v8h-2zM2256 934h2v12h-2zM2258 930h2v12h-2zM2260 940h2v12h-2zM2262 934h2v16h-2zM2264 924h2v12h-2zM2266 930h2v16h-2zM2268 940h2v12h-2zM2270 930h2v12h-2zM2272 932h2v10h-2zM2274 940h2v8h-2zM2276 930h2v12h-2zM2278 928h2v14h-2zM2280 940h2v12h-2zM2282 932h2v12h-2zM2284 934h2v10h-2zM2286 942h2v10h-2zM2288 936h2v14h-2zM2290 928h2v12h-2zM2292 938h2v10h-2zM2294 932h2v10h-2zM2296 930h2v10h-2zM2298 938h2v10h-2zM2300 936h2v10h-2zM2302 932h2v6h-2zM2304 936h2v12h-2zM2306 942h2v12h-2zM2308 934h2v10h-2zM2310 934h2v8h-2zM2312 940h2v10h-2zM2314 944h2v8h-2zM2316 934h2v12h-2zM2318 934h2v12h-2zM2320 944h2v14h-2zM2322 938h2v12h-2zM2324 934h2v8h-2zM2326 940h2v10h-2zM2328 942h2v10h-2zM2330 932h2v12h-2zM2332 940h2v8h-2zM2334 942h2v4h-2zM2336 936h2v8h-2zM2338 930h2v10h-2zM2340 938h2v12h-2zM2342 930h2v14h-2zM2344 926h2v12h-2zM2346 936h2v14h-2zM2348 946h2v6h-2zM2350 936h2v12h-2zM2352 930h2v10h-2zM2354 938h2v10h-2zM2356 946h2v4h-2zM2358 942h2v8h-2zM2360 930h2v14h-2zM2362 926h2v14h-2zM2364 938h2v14h-2zM2366 938h2v10h-2zM2368 934h2v6h-2zM2370 932h2v14h-2zM2372 944h2v12h-2zM2374 934h2v12h-2zM2376 934h2v8h-2zM2378 940h2v10h-2zM2380 940h2v10h-2zM2382 930h2v12h-2zM2384 934h2v12h-2zM2386 942h2v10h-2zM2388 932h2v12h-2zM2390 930h2v8h-2zM2392 936h2v14h-2zM2394 948h2v8h-2zM2396 936h2v14h-2zM2398 932h2v6h-2zM2400 932h2v10h-2zM2402 940h2v10h-2zM2404 932h2v10h-2zM2406 930h2v14h-2zM2408 942h2v14h-2zM2410 944h2v8h-2zM2412 940h2v6h-2zM2414 944h2v4h-2zM2416 936h2v10h-2zM2418 928h2v10h-2zM2420 934h2v12h-2zM2422 942h2v10h-2zM2424 936h2v58h-2zM2426 968h2v84h-2zM2428 888h2v82h-2zM2430 952h2v68h-2zM2432 960h2v30h-2zM2434 958h2v28h-2zM2436 932h2v28h-2zM2438 958h2v28h-2zM2440 946h2v20h-2zM2442 958h2v14h-2zM2444 954h2v16h-2zM2446 944h2v12h-2zM2448 942h2v16h-2zM2450 956h2v18h-2zM2452 954h2v16h-2zM2454 944h2v12h-2zM2456 950h2v14h-2zM2458 960h2v10h-2zM2460 940h2v22h-2zM2462 930h2v12h-2zM2464 936h2v20h-2zM2466 954h2v12h-2zM2468 950h2v10h-2z"/></svg>
<svg style="left:0;top:0" width="2560" height="1600" shape-rendering="crispEdges"><path fill="#ffffff" d="M2066 108h8v24h-8zM2066 140h8v8h-8zM2066 156h8v24h-8zM2066 188h8v8h-8zM2066 204h8v24h-8zM2066 236h8v8h-8zM2066 252h8v24h-8zM2066 284h8v8h-8zM2066 300h8v24h-8zM2066 332h8v8h-8zM2066 348h8v24h-8zM2066 380h8v8h-8zM2066 396h8v24h-8zM2066 428h8v8h-8zM2066 444h8v24h-8zM2066 476h8v8h-8zM2066 492h8v24h-8zM2066 524h8v8h-8zM2066 540h8v24h-8zM2066 572h8v8h-8zM2066 588h8v24h-8zM2066 620h8v8h-8zM2066 636h8v24h-8zM2066 668h8v8h-8zM2066 684h8v24h-8zM2066 716h8v8h-8zM2066 732h8v24h-8zM2066 764h8v8h-8zM2066 780h8v24h-8zM2066 812h8v8h-8zM2066 828h8v24h-8zM2066 860h8v8h-8zM2066 876h8v24h-8zM2066 908h8v8h-8zM2066 924h8v24h-8zM2066 956h8v8h-8zM2066 972h8v24h-8zM2066 1004h8v8h-8zM2066 1020h8v24h-8zM2066 1052h8v8h-8zM2066 1068h8v24h-8zM2066 1100h8v8h-8zM2066 1116h8v24h-8zM2066 1148h8v8h-8zM2066 1164h8v24h-8z"/></svg>
<div class="r" style="left:1174px;top:120px;width:30px;height:2px;background:#00ff00;"></div>
<div class="r" style="left:1188px;top:108px;width:2px;height:28px;background:#00ff00;"></div>
<div class="r" style="left:2470px;top:496px;width:14px;height:2px;background:#ffff00;"></div>
<div class="r" style="left:2484px;top:480px;width:56px;height:34px;background:#ffff00;"></div>
<svg style="left:2500px;top:480px" width="24" height="34" viewBox="0 0 24 34" shape-rendering="crispEdges"><path fill="#000000" d="M12 6h2v20h-2zM10 8h2v2h-2zM8 10h2v2h-2z"/><path fill="#803000" d="M6 10h2v4h-2z"/></svg>
<div class="r" style="left:2470px;top:924px;width:14px;height:2px;background:#00ff00;"></div>
<div class="r" style="left:2484px;top:908px;width:56px;height:34px;background:#00ff00;"></div>
<svg style="left:2500px;top:908px" width="24" height="34" viewBox="0 0 24 34" shape-rendering="crispEdges"><path fill="#000000" d="M10 6h6v2h-6zM8 8h2v2h-2zM14 8h4v2h-4zM6 10h2v4h-2zM16 10h2v4h-2zM14 14h2v2h-2zM12 16h2v2h-2zM10 18h2v2h-2zM8 20h2v2h-2zM6 22h12v4h-12z"/></svg>
<div class="t" style="left:-144.5px;width:600px;text-align:center;top:1197.45px;font-size:29px;color:#fff;font-weight:bold;">0</div>
<div class="t" style="left:86.89999999999998px;width:600px;text-align:center;top:1197.45px;font-size:29px;color:#fff;font-weight:bold;">20</div>
<div class="t" style="left:318.29999999999995px;width:600px;text-align:center;top:1197.45px;font-size:29px;color:#fff;font-weight:bold;">40</div>
<div class="t" style="left:549.7px;width:600px;text-align:center;top:1197.45px;font-size:29px;color:#fff;font-weight:bold;">60</div>
<div class="t" style="left:781.0999999999999px;width:600px;text-align:center;top:1197.45px;font-size:29px;color:#fff;font-weight:bold;">80</div>
<div class="t" style="left:1012.5px;width:600px;text-align:center;top:1197.45px;font-size:29px;color:#fff;font-weight:bold;">100</div>
<div class="t" style="left:1243.9px;width:600px;text-align:center;top:1197.45px;font-size:29px;color:#fff;font-weight:bold;">120</div>
<div class="t" style="left:1475.3px;width:600px;text-align:center;top:1197.45px;font-size:29px;color:#fff;font-weight:bold;">140</div>
<div class="t" style="left:1706.7px;width:600px;text-align:center;top:1197.45px;font-size:29px;color:#fff;font-weight:bold;">160</div>
<div class="t" style="left:1938.1px;width:600px;text-align:center;top:1197.45px;font-size:29px;color:#fff;font-weight:bold;">180</div>
<div class="t" style="left:2426px;top:1197.45px;font-size:29px;color:#fff;font-weight:bold;letter-spacing:-0.3px">200 ms</div>
<div class="t" style="left:49px;top:1248.76px;font-size:24.5px;color:#fff;font-weight:bold;">Profile</div>
<div class="t" style="left:1283px;top:1248.76px;font-size:24.5px;color:#fff;font-weight:bold;letter-spacing:0.5px">Min</div>
<div class="t" style="left:1442.5px;top:1248.76px;font-size:24.5px;color:#fff;font-weight:bold;">Live</div>
<div class="t" style="left:1600px;top:1248.76px;font-size:24.5px;color:#fff;font-weight:bold;letter-spacing:0.5px">Max</div>
<div class="t" style="left:1859px;top:1248.76px;font-size:24.5px;color:#fff;font-weight:bold;">Cursor 1</div>
<div class="t" style="left:2029px;top:1248.76px;font-size:24.5px;color:#fff;font-weight:bold;">Cursor 2</div>
<div class="t" style="left:2217px;top:1248.76px;font-size:24.5px;color:#fff;font-weight:bold;">Delta</div>
<div class="t" style="left:2366px;top:1248.76px;font-size:24.5px;color:#fff;font-weight:bold;">Frequency</div>
<div class="r" style="left:20px;top:1290px;width:1092px;height:2px;background:#ffffff;"></div>
<div class="r" style="left:1232px;top:1290px;width:472px;height:2px;background:#ffffff;"></div>
<div class="r" style="left:1824px;top:1290px;width:718px;height:2px;background:#ffffff;"></div>
<div class="t" style="left:228px;top:1309.68px;font-size:24px;color:#ffff00;font-weight:bold;">1</div>
<div class="t" style="left:228px;top:1367.68px;font-size:24px;color:#00ff00;font-weight:bold;">2</div>
<div class="t" style="left:903.5px;top:1309.76px;font-size:24.5px;color:#ffff00;font-weight:bold;">100 mV</div>
<div class="t" style="left:919.5px;top:1367.76px;font-size:24.5px;color:#00ff00;font-weight:bold;">3 kV</div>
<div class="t" style="left:903.5px;top:1424.76px;font-size:24.5px;color:#fff;font-weight:bold;letter-spacing:0.3px">100 ms</div>
<div class="r" style="left:1290px;top:1324px;width:6px;height:2px;background:#ffff00;"></div>
<div class="r" style="left:1298px;top:1324px;width:6px;height:2px;background:#ffff00;"></div>
<div class="r" style="left:1306px;top:1324px;width:6px;height:2px;background:#ffff00;"></div>
<div class="r" style="left:1314px;top:1324px;width:6px;height:2px;background:#ffff00;"></div>
<div class="r" style="left:1322px;top:1324px;width:6px;height:2px;background:#ffff00;"></div>
<div class="r" style="left:1444px;top:1322px;width:8px;height:4px;background:#ffff00;"></div>
<div class="r" style="left:1454px;top:1322px;width:8px;height:4px;background:#ffff00;"></div>
<div class="r" style="left:1464px;top:1322px;width:8px;height:4px;background:#ffff00;"></div>
<div class="r" style="left:1474px;top:1322px;width:8px;height:4px;background:#ffff00;"></div>
<div class="r" style="left:1484px;top:1322px;width:8px;height:4px;background:#ffff00;"></div>
<div class="r" style="left:1610px;top:1324px;width:6px;height:2px;background:#ffff00;"></div>
<div class="r" style="left:1618px;top:1324px;width:6px;height:2px;background:#ffff00;"></div>
<div class="r" style="left:1626px;top:1324px;width:6px;height:2px;background:#ffff00;"></div>
<div class="r" style="left:1634px;top:1324px;width:6px;height:2px;background:#ffff00;"></div>
<div class="r" style="left:1642px;top:1324px;width:6px;height:2px;background:#ffff00;"></div>
<div class="r" style="left:1290px;top:1382px;width:6px;height:2px;background:#00ff00;"></div>
<div class="r" style="left:1298px;top:1382px;width:6px;height:2px;background:#00ff00;"></div>
<div class="r" style="left:1306px;top:1382px;width:6px;height:2px;background:#00ff00;"></div>
<div class="r" style="left:1314px;top:1382px;width:6px;height:2px;background:#00ff00;"></div>
<div class="r" style="left:1322px;top:1382px;width:6px;height:2px;background:#00ff00;"></div>
<div class="r" style="left:1444px;top:1384px;width:8px;height:4px;background:#00ff00;"></div>
<div class="r" style="left:1454px;top:1384px;width:8px;height:4px;background:#00ff00;"></div>
<div class="r" style="left:1464px;top:1384px;width:8px;height:4px;background:#00ff00;"></div>
<div class="r" style="left:1474px;top:1384px;width:8px;height:4px;background:#00ff00;"></div>
<div class="r" style="left:1484px;top:1384px;width:8px;height:4px;background:#00ff00;"></div>
<div class="r" style="left:1610px;top:1382px;width:6px;height:2px;background:#00ff00;"></div>
<div class="r" style="left:1618px;top:1382px;width:6px;height:2px;background:#00ff00;"></div>
<div class="r" style="left:1626px;top:1382px;width:6px;height:2px;background:#00ff00;"></div>
<div class="r" style="left:1634px;top:1382px;width:6px;height:2px;background:#00ff00;"></div>
<div class="r" style="left:1642px;top:1382px;width:6px;height:2px;background:#00ff00;"></div>
<svg style="left:66px;top:1300px" width="40" height="40" viewBox="0 0 40 40" shape-rendering="crispEdges"><path fill="#303038" d="M5 5h30v1h-30zM5 34h30v1h-30z"/><path fill="#ffff00" d="M6 6h28v2h-28zM6 8h2v4h-2zM32 8h2v4h-2zM6 32h28v2h-28zM6 28h2v4h-2zM32 28h2v4h-2z"/></svg>
<svg style="left:66px;top:1300px" width="40" height="40" viewBox="0 0 40 40">
<defs><radialGradient id="eg1300" cx="0.5" cy="0.5" r="0.5"><stop offset="0" stop-color="#909090"/><stop offset="0.75" stop-color="#7a7a7a"/><stop offset="1" stop-color="#202020"/></radialGradient></defs>
<ellipse cx="20" cy="20.5" rx="14" ry="8.5" fill="url(#eg1300)"/>
<ellipse cx="12" cy="20" rx="4" ry="4.5" fill="#f4f4f4"/><ellipse cx="28.5" cy="20.5" rx="3.8" ry="4.5" fill="#f0f0f0"/>
<circle cx="21" cy="21" r="4.8" fill="#101010"/><rect x="18" y="18" width="2.5" height="2.5" fill="#ffffff"/>
</svg>
<svg style="left:66px;top:1358px" width="40" height="40" viewBox="0 0 40 40" shape-rendering="crispEdges"><path fill="#303038" d="M5 5h30v1h-30zM5 34h30v1h-30z"/><path fill="#00ff00" d="M6 6h28v2h-28zM6 8h2v4h-2zM32 8h2v4h-2zM6 32h28v2h-28zM6 28h2v4h-2zM32 28h2v4h-2z"/></svg>
<svg style="left:66px;top:1358px" width="40" height="40" viewBox="0 0 40 40">
<defs><radialGradient id="eg1358" cx="0.5" cy="0.5" r="0.5"><stop offset="0" stop-color="#909090"/><stop offset="0.75" stop-color="#7a7a7a"/><stop offset="1" stop-color="#202020"/></radialGradient></defs>
<ellipse cx="20" cy="20.5" rx="14" ry="8.5" fill="url(#eg1358)"/>
<ellipse cx="12" cy="20" rx="4" ry="4.5" fill="#f4f4f4"/><ellipse cx="28.5" cy="20.5" rx="3.8" ry="4.5" fill="#f0f0f0"/>
<circle cx="21" cy="21" r="4.8" fill="#101010"/><rect x="18" y="18" width="2.5" height="2.5" fill="#ffffff"/>
</svg>
<svg style="left:330px;top:1300px" width="70" height="36" viewBox="0 0 70 36" shape-rendering="crispEdges"><path fill="#ffff00" d="M4 18h14v2h-14zM18 16h2v6h-2zM20 14h28v10h-28zM22 8h4v22h-4zM48 18h2v2h-2zM50 16h4v8h-4zM56 16h4v4h-4zM48 20h16v2h-16zM50 22h4v2h-4zM56 22h4v2h-4zM60 22h4v4h-4zM54 26h8v2h-8zM52 28h6v2h-6zM52 30h4v2h-4zM54 32h14v2h-14z"/><path fill="#000000" d="M20 18h4v2h-4zM26 18h20v2h-20zM50 18h2v2h-2z"/><path fill="#ff00ff" d="M22 28h2v2h-2z"/></svg>
<svg style="left:330px;top:1358px" width="70" height="34" viewBox="0 0 70 34" shape-rendering="crispEdges"><path fill="#00ff00" d="M8 8h60v2h-60zM6 10h60v2h-60zM4 12h58v2h-58zM4 14h60v10h-60zM4 24h58v2h-58zM6 26h60v2h-60zM8 28h60v2h-60z"/><path fill="#000000" d="M14 16h34v2h-34zM14 22h34v2h-34zM4 18h4v2h-4zM10 18h4v2h-4zM48 18h2v2h-2zM54 14h6v2h-6zM54 24h6v2h-6zM52 16h2v8h-2zM60 16h2v8h-2z"/></svg>
<svg style="left:540px;top:1300px" width="40" height="40" viewBox="0 0 40 40" shape-rendering="crispEdges"><path fill="#b4b4b4" d="M6 10h4v2h-4zM12 10h4v2h-4zM18 10h4v2h-4zM24 10h4v2h-4zM30 10h4v2h-4zM6 32h28v2h-28zM8 24h2v8h-2zM10 16h4v16h-4zM14 24h2v8h-2zM16 28h2v4h-2zM18 22h2v10h-2zM20 16h2v16h-2zM22 14h6v18h-6zM28 16h2v16h-2zM30 22h2v10h-2z"/></svg>
<svg style="left:450px;top:1356px" width="40" height="40" viewBox="0 0 40 40" shape-rendering="crispEdges"><path fill="#b4b4b4" d="M6 34h28v2h-28zM8 26h2v8h-2zM10 18h4v16h-4zM14 26h2v8h-2zM16 30h2v4h-2zM18 26h2v8h-2zM20 18h2v16h-2zM22 10h2v24h-2zM24 6h2v28h-2zM26 10h2v24h-2zM28 18h2v16h-2zM30 26h2v8h-2z"/></svg>
<svg style="left:630px;top:1356px" width="40" height="40" viewBox="0 0 40 40" shape-rendering="crispEdges"><path fill="#b8b8b8" d="M12 6h2v2h-2zM10 8h6v2h-6zM8 10h10v2h-10zM6 12h14v2h-14zM4 14h18v2h-18zM4 18h18v2h-18zM4 22h18v2h-18zM6 24h14v2h-14zM8 26h10v2h-10zM10 28h6v2h-6zM12 30h2v2h-2zM20 8h10v2h-10zM28 10h2v18h-2zM22 28h14v2h-14zM24 30h10v2h-10zM26 32h6v2h-6zM28 34h2v2h-2z"/></svg>
<svg style="left:1044px;top:1358px" width="40" height="40" viewBox="0 0 40 40" shape-rendering="crispEdges"><path fill="#00ff00" d="M6 32h8v2h-8zM12 30h4v2h-4zM14 28h4v2h-4zM16 24h2v4h-2zM16 22h4v2h-4zM18 18h2v4h-2zM18 18h4v2h-4zM20 14h2v4h-2zM20 14h4v2h-4zM22 10h2v4h-2zM22 10h4v2h-4zM24 8h4v2h-4zM26 6h8v2h-8z"/></svg>
<svg style="left:29px;top:1484px" width="82" height="82" viewBox="0 0 82 82">
<defs><linearGradient id="dg70" x1="0" y1="0" x2="0" y2="1">
<stop offset="0" stop-color="#6a6a6e"/><stop offset="0.5" stop-color="#2e2e30"/><stop offset="0.5" stop-color="#000"/><stop offset="0.75" stop-color="#0a1e30"/><stop offset="1" stop-color="#3a3a3e"/></linearGradient></defs>
<circle cx="41" cy="41" r="39" fill="#0c0c14"/>
<circle cx="41" cy="41" r="36.5" fill="url(#dg70)"/>
<rect x="33" y="26" width="16" height="5" fill="#8e929a"/><rect x="37" y="30" width="10" height="4" fill="#505460"/><rect x="19" y="30" width="44" height="28" fill="#8e929a"/>
<circle cx="41" cy="46" r="10.5" fill="#5a5e68"/><circle cx="41" cy="47" r="8" fill="#a4a8b0"/><path d="M32.5 47 Q41 36 49.5 47 Z" fill="#000"/>
<rect x="40" y="12" width="3" height="12" fill="#8a8e96"/><path d="M24 16 L31 24 M58 16 L51 24" stroke="#8a8e96" stroke-width="3"/>
</svg>
<svg style="left:156px;top:1484px" width="82" height="82" viewBox="0 0 82 82">
<defs><linearGradient id="dg197" x1="0" y1="0" x2="0" y2="1">
<stop offset="0" stop-color="#6a6a6e"/><stop offset="0.5" stop-color="#2e2e30"/><stop offset="0.5" stop-color="#000"/><stop offset="0.75" stop-color="#0a1e30"/><stop offset="1" stop-color="#3a3a3e"/></linearGradient></defs>
<circle cx="41" cy="41" r="39" fill="#0c0c14"/>
<circle cx="41" cy="41" r="36.5" fill="url(#dg197)"/>
<rect x="21" y="21" width="40" height="40" rx="1.5" fill="#8a8f98"/>
</svg>
<svg style="left:412px;top:1484px" width="82" height="82" viewBox="0 0 82 82">
<defs><linearGradient id="dg453" x1="0" y1="0" x2="0" y2="1">
<stop offset="0" stop-color="#6a6a6e"/><stop offset="0.5" stop-color="#2e2e30"/><stop offset="0.5" stop-color="#000"/><stop offset="0.75" stop-color="#0a1e30"/><stop offset="1" stop-color="#3a3a3e"/></linearGradient></defs>
<circle cx="41" cy="41" r="39" fill="#0c0c14"/>
<circle cx="41" cy="41" r="36.5" fill="url(#dg453)"/>
<circle cx="41" cy="42" r="20" fill="#8a8f98"/>
</svg>
<svg style="left:283px;top:1482px" width="86" height="86" viewBox="0 0 86 86">
<defs><linearGradient id="wg326" x1="0" y1="0" x2="0" y2="1">
<stop offset="0" stop-color="#ffffff"/><stop offset="0.3" stop-color="#f8f8fa"/><stop offset="0.5" stop-color="#ececf0"/><stop offset="0.5" stop-color="#d8d8e2"/><stop offset="0.75" stop-color="#e6e6ec"/><stop offset="0.92" stop-color="#f4f4f8"/><stop offset="1" stop-color="#c0b8e0"/></linearGradient>
<radialGradient id="wr326" cx="0.5" cy="0.5" r="0.5"><stop offset="0.86" stop-color="#ffffff" stop-opacity="0"/><stop offset="0.95" stop-color="#9a90d0" stop-opacity="0.8"/><stop offset="1" stop-color="#3a2a90" stop-opacity="1"/></radialGradient></defs>
<circle cx="43" cy="43" r="41.5" fill="#24148a"/>
<circle cx="43" cy="43" r="40.2" fill="url(#wg326)"/>
<circle cx="43" cy="43" r="40.2" fill="url(#wr326)"/>
<path d="M26 24 V64 L66 44 Z" fill="#3cb040"/><path d="M26 24 V64 L30 62 V26 Z" fill="#2a8a30"/>
</svg>
<svg style="left:793px;top:1482px" width="86" height="86" viewBox="0 0 86 86">
<defs><linearGradient id="wg836" x1="0" y1="0" x2="0" y2="1">
<stop offset="0" stop-color="#ffffff"/><stop offset="0.3" stop-color="#f8f8fa"/><stop offset="0.5" stop-color="#ececf0"/><stop offset="0.5" stop-color="#d8d8e2"/><stop offset="0.75" stop-color="#e6e6ec"/><stop offset="0.92" stop-color="#f4f4f8"/><stop offset="1" stop-color="#c0b8e0"/></linearGradient>
<radialGradient id="wr836" cx="0.5" cy="0.5" r="0.5"><stop offset="0.86" stop-color="#ffffff" stop-opacity="0"/><stop offset="0.95" stop-color="#9a90d0" stop-opacity="0.8"/><stop offset="1" stop-color="#3a2a90" stop-opacity="1"/></radialGradient></defs>
<circle cx="43" cy="43" r="41.5" fill="#24148a"/>
<circle cx="43" cy="43" r="40.2" fill="url(#wg836)"/>
<circle cx="43" cy="43" r="40.2" fill="url(#wr836)"/>
<path d="M19.3 43.3 L42.7 19.9 V31.2 L30.8 43.3 L42.7 56.4 V67.7 Z" fill="#4a6090"/><path d="M37.2 43.3 L62.8 19.9 V67.7 Z" fill="#4a6090"/>
</svg>
<svg style="left:921px;top:1482px" width="86" height="86" viewBox="0 0 86 86">
<defs><linearGradient id="wg964" x1="0" y1="0" x2="0" y2="1">
<stop offset="0" stop-color="#ffffff"/><stop offset="0.3" stop-color="#f8f8fa"/><stop offset="0.5" stop-color="#ececf0"/><stop offset="0.5" stop-color="#d8d8e2"/><stop offset="0.75" stop-color="#e6e6ec"/><stop offset="0.92" stop-color="#f4f4f8"/><stop offset="1" stop-color="#c0b8e0"/></linearGradient>
<radialGradient id="wr964" cx="0.5" cy="0.5" r="0.5"><stop offset="0.86" stop-color="#ffffff" stop-opacity="0"/><stop offset="0.95" stop-color="#9a90d0" stop-opacity="0.8"/><stop offset="1" stop-color="#3a2a90" stop-opacity="1"/></radialGradient></defs>
<circle cx="43" cy="43" r="41.5" fill="#24148a"/>
<circle cx="43" cy="43" r="40.2" fill="url(#wg964)"/>
<circle cx="43" cy="43" r="40.2" fill="url(#wr964)"/>
<path d="M27.4 43.3 L53 19.9 V67.7 Z" fill="#4a6090"/>
</svg>
<svg style="left:1947px;top:1482px" width="86" height="86" viewBox="0 0 86 86">
<defs><linearGradient id="wg1990" x1="0" y1="0" x2="0" y2="1">
<stop offset="0" stop-color="#ffffff"/><stop offset="0.3" stop-color="#f8f8fa"/><stop offset="0.5" stop-color="#ececf0"/><stop offset="0.5" stop-color="#d8d8e2"/><stop offset="0.75" stop-color="#e6e6ec"/><stop offset="0.92" stop-color="#f4f4f8"/><stop offset="1" stop-color="#c0b8e0"/></linearGradient>
<radialGradient id="wr1990" cx="0.5" cy="0.5" r="0.5"><stop offset="0.86" stop-color="#ffffff" stop-opacity="0"/><stop offset="0.95" stop-color="#9a90d0" stop-opacity="0.8"/><stop offset="1" stop-color="#3a2a90" stop-opacity="1"/></radialGradient></defs>
<circle cx="43" cy="43" r="41.5" fill="#24148a"/>
<circle cx="43" cy="43" r="40.2" fill="url(#wg1990)"/>
<circle cx="43" cy="43" r="40.2" fill="url(#wr1990)"/>
<path d="M32.5 19.9 V67.7 L58.5 43.3 Z" fill="#4a6090"/>
</svg>
<svg style="left:2074px;top:1482px" width="86" height="86" viewBox="0 0 86 86">
<defs><linearGradient id="wg2117" x1="0" y1="0" x2="0" y2="1">
<stop offset="0" stop-color="#ffffff"/><stop offset="0.3" stop-color="#f8f8fa"/><stop offset="0.5" stop-color="#ececf0"/><stop offset="0.5" stop-color="#d8d8e2"/><stop offset="0.75" stop-color="#e6e6ec"/><stop offset="0.92" stop-color="#f4f4f8"/><stop offset="1" stop-color="#c0b8e0"/></linearGradient>
<radialGradient id="wr2117" cx="0.5" cy="0.5" r="0.5"><stop offset="0.86" stop-color="#ffffff" stop-opacity="0"/><stop offset="0.95" stop-color="#9a90d0" stop-opacity="0.8"/><stop offset="1" stop-color="#3a2a90" stop-opacity="1"/></radialGradient></defs>
<circle cx="43" cy="43" r="41.5" fill="#24148a"/>
<circle cx="43" cy="43" r="40.2" fill="url(#wg2117)"/>
<circle cx="43" cy="43" r="40.2" fill="url(#wr2117)"/>
<path d="M23 19.9 V67.7 L48.6 43.3 Z" fill="#4a6090"/><path d="M47.3 19.9 L70.7 43.3 L47.3 67.7 V56.4 L59.2 43.3 L47.3 31.2 Z" fill="#4a6090"/>
</svg>
<svg style="left:2203px;top:1482px" width="86" height="86" viewBox="0 0 86 86">
<defs><linearGradient id="wg2246" x1="0" y1="0" x2="0" y2="1">
<stop offset="0" stop-color="#ffffff"/><stop offset="0.3" stop-color="#f8f8fa"/><stop offset="0.5" stop-color="#ececf0"/><stop offset="0.5" stop-color="#d8d8e2"/><stop offset="0.75" stop-color="#e6e6ec"/><stop offset="0.92" stop-color="#f4f4f8"/><stop offset="1" stop-color="#c0b8e0"/></linearGradient>
<radialGradient id="wr2246" cx="0.5" cy="0.5" r="0.5"><stop offset="0.86" stop-color="#ffffff" stop-opacity="0"/><stop offset="0.95" stop-color="#9a90d0" stop-opacity="0.8"/><stop offset="1" stop-color="#3a2a90" stop-opacity="1"/></radialGradient></defs>
<circle cx="43" cy="43" r="41.5" fill="#24148a"/>
<circle cx="43" cy="43" r="40.2" fill="url(#wg2246)"/>
<circle cx="43" cy="43" r="40.2" fill="url(#wr2246)"/>
<path d="M19 20 H49 V30.4 H37 L57.3 50.3 V38 H66.7 V67.7 H37 V57.6 H49 L29.5 38 V49.7 H19 Z" fill="#4a6090"/><path d="M53.3 20 H66.7 V33.6 H63 V24 H53.3 Z" fill="#4a6090"/><path d="M19 54 H22.7 V64 H33 V67.7 H19 Z" fill="#4a6090"/>
</svg>
<svg style="left:2459px;top:1482px" width="86" height="86" viewBox="0 0 86 86">
<defs><linearGradient id="wg2502" x1="0" y1="0" x2="0" y2="1">
<stop offset="0" stop-color="#ffffff"/><stop offset="0.3" stop-color="#f8f8fa"/><stop offset="0.5" stop-color="#ececf0"/><stop offset="0.5" stop-color="#d8d8e2"/><stop offset="0.75" stop-color="#e6e6ec"/><stop offset="0.92" stop-color="#f4f4f8"/><stop offset="1" stop-color="#c0b8e0"/></linearGradient>
<radialGradient id="wr2502" cx="0.5" cy="0.5" r="0.5"><stop offset="0.86" stop-color="#ffffff" stop-opacity="0"/><stop offset="0.95" stop-color="#9a90d0" stop-opacity="0.8"/><stop offset="1" stop-color="#3a2a90" stop-opacity="1"/></radialGradient></defs>
<circle cx="43" cy="43" r="41.5" fill="#24148a"/>
<circle cx="43" cy="43" r="40.2" fill="url(#wg2502)"/>
<circle cx="43" cy="43" r="40.2" fill="url(#wr2502)"/>
<circle cx="34.5" cy="35" r="15.6" fill="none" stroke="#4a6090" stroke-width="6.2"/><path d="M44 53 L51 46 L66.7 59.5 V67.4 H58 Z" fill="#4a6090"/>
</svg>
<div class="t" style="left:600px;top:1507.53px;font-size:36px;color:#fff;font-weight:normal;letter-spacing:-0.45px">00:03:841</div>
<div class="t" style="left:2389px;top:1507.53px;font-size:36px;color:#fff;font-weight:normal;">x2</div>
<div class="r" style="left:1024px;top:1490px;width:906px;height:8px;background:#e6e8e8;"></div>
<div class="r" style="left:1035px;top:1518px;width:2px;height:8px;background:#e0e0e0;"></div>
<div class="r" style="left:1059px;top:1518px;width:2px;height:6px;background:#e0e0e0;"></div>
<div class="r" style="left:1082px;top:1518px;width:2px;height:6px;background:#e0e0e0;"></div>
<div class="r" style="left:1106px;top:1518px;width:2px;height:6px;background:#e0e0e0;"></div>
<div class="r" style="left:1129px;top:1518px;width:2px;height:6px;background:#e0e0e0;"></div>
<div class="r" style="left:1153px;top:1518px;width:2px;height:6px;background:#e0e0e0;"></div>
<div class="r" style="left:1176px;top:1518px;width:2px;height:6px;background:#e0e0e0;"></div>
<div class="r" style="left:1200px;top:1518px;width:2px;height:6px;background:#e0e0e0;"></div>
<div class="r" style="left:1223px;top:1518px;width:2px;height:6px;background:#e0e0e0;"></div>
<div class="r" style="left:1247px;top:1518px;width:2px;height:6px;background:#e0e0e0;"></div>
<div class="r" style="left:1270px;top:1518px;width:2px;height:6px;background:#e0e0e0;"></div>
<div class="r" style="left:1294px;top:1518px;width:2px;height:6px;background:#e0e0e0;"></div>
<div class="r" style="left:1318px;top:1518px;width:2px;height:6px;background:#e0e0e0;"></div>
<div class="r" style="left:1341px;top:1518px;width:2px;height:6px;background:#e0e0e0;"></div>
<div class="r" style="left:1365px;top:1518px;width:2px;height:6px;background:#e0e0e0;"></div>
<div class="r" style="left:1388px;top:1518px;width:2px;height:6px;background:#e0e0e0;"></div>
<div class="r" style="left:1412px;top:1518px;width:2px;height:6px;background:#e0e0e0;"></div>
<div class="r" style="left:1435px;top:1518px;width:2px;height:6px;background:#e0e0e0;"></div>
<div class="r" style="left:1459px;top:1518px;width:2px;height:6px;background:#e0e0e0;"></div>
<div class="r" style="left:1482px;top:1518px;width:2px;height:6px;background:#e0e0e0;"></div>
<div class="r" style="left:1506px;top:1518px;width:2px;height:6px;background:#e0e0e0;"></div>
<div class="r" style="left:1530px;top:1518px;width:2px;height:6px;background:#e0e0e0;"></div>
<div class="r" style="left:1553px;top:1518px;width:2px;height:6px;background:#e0e0e0;"></div>
<div class="r" style="left:1577px;top:1518px;width:2px;height:6px;background:#e0e0e0;"></div>
<div class="r" style="left:1600px;top:1518px;width:2px;height:6px;background:#e0e0e0;"></div>
<div class="r" style="left:1624px;top:1518px;width:2px;height:6px;background:#e0e0e0;"></div>
<div class="r" style="left:1647px;top:1518px;width:2px;height:6px;background:#e0e0e0;"></div>
<div class="r" style="left:1671px;top:1518px;width:2px;height:6px;background:#e0e0e0;"></div>
<div class="r" style="left:1694px;top:1518px;width:2px;height:6px;background:#e0e0e0;"></div>
<div class="r" style="left:1718px;top:1518px;width:2px;height:6px;background:#e0e0e0;"></div>
<div class="r" style="left:1741px;top:1518px;width:2px;height:6px;background:#e0e0e0;"></div>
<div class="r" style="left:1765px;top:1518px;width:2px;height:6px;background:#e0e0e0;"></div>
<div class="r" style="left:1789px;top:1518px;width:2px;height:6px;background:#e0e0e0;"></div>
<div class="r" style="left:1812px;top:1518px;width:2px;height:6px;background:#e0e0e0;"></div>
<div class="r" style="left:1836px;top:1518px;width:2px;height:6px;background:#e0e0e0;"></div>
<div class="r" style="left:1859px;top:1518px;width:2px;height:6px;background:#e0e0e0;"></div>
<div class="r" style="left:1883px;top:1518px;width:2px;height:6px;background:#e0e0e0;"></div>
<div class="r" style="left:1906px;top:1518px;width:2px;height:6px;background:#e0e0e0;"></div>
<div class="r" style="left:1918px;top:1518px;width:2px;height:8px;background:#e0e0e0;"></div>
<svg style="left:1455px;top:1478px" width="24" height="40" viewBox="0 0 24 40"><path d="M0 0 H23 V30 L11.5 39 L0 30 Z" fill="#0078d7"/></svg>
<div class="r" style="left:96px;top:1598px;width:687px;height:2px;background:#3c3c3c;"></div>
<div class="r" style="left:1179px;top:1598px;width:95px;height:2px;background:#3c3c3c;"></div>
</body></html>
